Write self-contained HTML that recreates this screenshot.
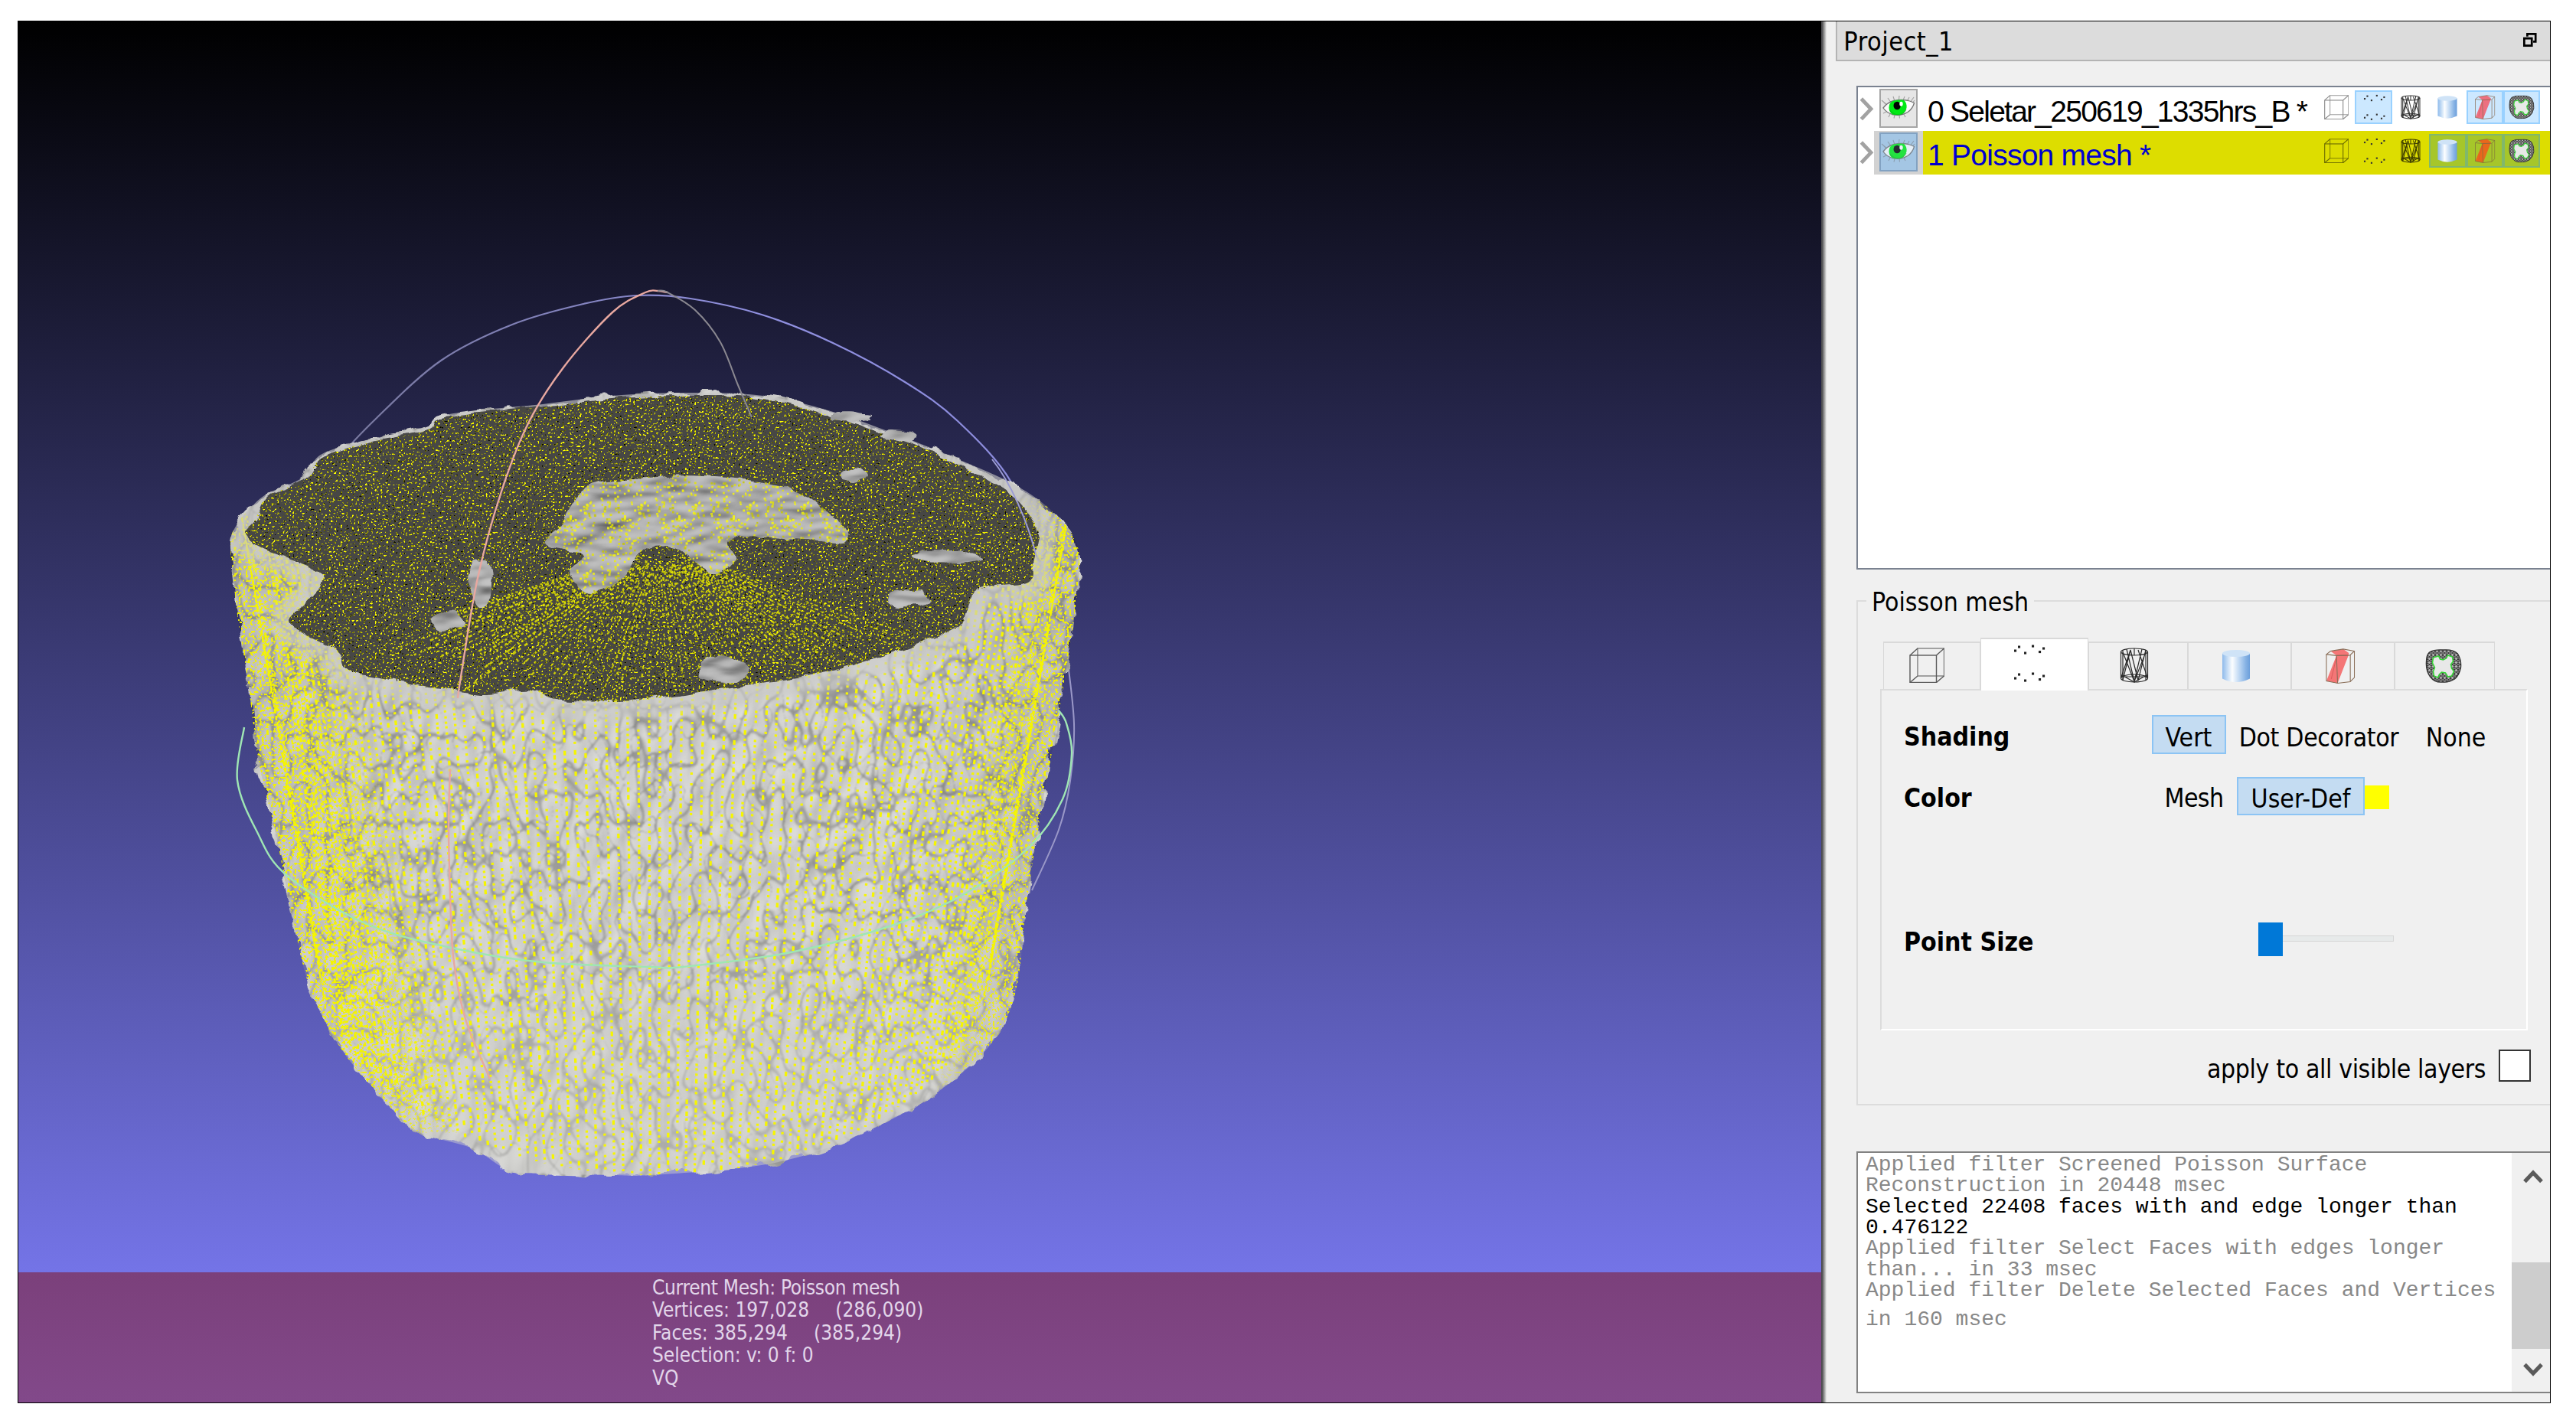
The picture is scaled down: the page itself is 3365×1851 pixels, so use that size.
<!DOCTYPE html>
<html><head><meta charset="utf-8"><title>MeshLab</title>
<style>
html,body{margin:0;padding:0;background:#fff;}
body{width:3365px;height:1851px;overflow:hidden;position:relative;font-family:"DejaVu Sans Condensed","Liberation Sans",sans-serif;}
#win{position:absolute;left:23px;top:27px;width:3309px;height:1806px;box-sizing:border-box;border:1px solid #000;overflow:hidden;background:#f0f0f0;}
#win>div{position:absolute;}
#view{left:0;top:0;width:2355px;height:1804px;overflow:hidden;background:linear-gradient(#000,#8080ff);}
#view svg.mesh{position:absolute;left:0;top:0;}
#band{position:absolute;left:0;top:1634px;width:2355px;height:170px;background:linear-gradient(#7b407b,#82498a);}
#info{position:absolute;left:828px;top:1640px;color:#e2d6ea;font-size:26px;line-height:29.45px;white-space:pre;}#info i{font-style:normal;letter-spacing:-0.3px}#info b{font-weight:normal;margin-left:4.5px}
#split{left:2355px;top:0;width:7px;height:1804px;background:linear-gradient(90deg,#48484c 0,#58585a 25%,#848484 45%,#b0b0b0 70%,#e4e4e4 95%,#f0f0f0 100%);}
#panel{left:2362px;top:0;width:945px;height:1804px;background:#f0f0f0;overflow:hidden;}
#panel>div{position:absolute;}
#title{left:12px;top:0;width:940px;height:52px;box-sizing:border-box;background:#dcdcdc;border-left:2px solid #b4b4b4;border-bottom:2px solid #b4b4b4;}
#title span{position:absolute;left:8.3px;top:5.8px;letter-spacing:0.5px;font-size:34px;line-height:40px;color:#000;}
#title svg{position:absolute;left:895.5px;top:14.5px;}
#tree{left:39px;top:84px;width:920px;height:632px;box-sizing:border-box;border:2px solid #7a8290;background:#fff;}
.row{position:absolute;left:0;width:916px;height:57px;}
.r0{top:0}.r1{top:57px}
.row>span{position:absolute;}
.arr{left:1px;top:13px;}
.eye{left:28px;top:2px;width:50px;height:51px;box-sizing:border-box;border:2px solid #a6a6a6;background:#e6e6e6;}
.eye.on{background:#a4c6e4;border-color:#82a2c2;top:2px;}.eye svg{position:absolute;left:0;top:-1px}.eye.on svg{opacity:.78}
.selbg{left:21px;top:0;width:64px;height:57px;background:#d2d2d2;}
.yel{left:85px;top:0;width:840px;height:57px;background:#dddd00;}
.lbl{left:91px;top:8.5px;font-family:"Liberation Sans",sans-serif;font-size:39px;line-height:46px;letter-spacing:-1.75px;color:#000;white-space:pre;}
.r1 .lbl{color:#0000d0;letter-spacing:-0.75px;}
.ic{top:4px;width:48.4px;height:44px;box-sizing:border-box;}
.ic.hl{background:#cce8ff;border:2px solid #99d1ff;}
.ic.hg{background:#a6c62a;border:2px solid #80b86c;}
.ic svg{position:absolute;left:50%;top:50%;transform:translate(-50%,-50%);}
#group{left:39px;top:756px;width:920px;height:660px;box-sizing:border-box;border:2px solid #dcdcdc;}
#group>div{position:absolute;}
#gtitle{left:11px;top:-21px;padding:0 7px;background:#f0f0f0;font-size:33.5px;line-height:44px;color:#000;}
#tabs{left:33px;top:52px;width:800px;height:62px;}
.tab{position:absolute;top:0;height:62px;box-sizing:border-box;border:2px solid #d9d9d9;border-bottom:none;border-left-width:1px;border-right-width:1px;background:#f0f0f0;}
.tab.sel{top:-5px;height:69px;background:#fff;z-index:2;border-color:#d9d9d9;}
.tab .ti{position:absolute;left:50%;top:50%;}.tab svg{position:absolute;left:0;top:0;transform:translate(-50%,-50%);}
#pane{left:29px;top:114px;width:846px;height:446px;box-sizing:border-box;border:2px solid #dcdcdc;border-right-color:#fff;border-bottom-color:#fff;background:#f0f0f0;}
#pane>div{position:absolute;}
.bl{left:29px;font-weight:bold;font-size:33.5px;line-height:44px;color:#000;}
.btn{box-sizing:border-box;font-size:33.5px;line-height:48px;text-align:center;color:#000;border:1px solid transparent;white-space:pre;}
.btn.on{background:#c4dcf2;border:2px solid #8cc4f4;line-height:46px;}
#ycol{left:631px;top:124px;width:32px;height:31px;background:#ffff00;}
#track{left:523px;top:320px;width:146px;height:8px;box-sizing:border-box;background:#e7eaea;border:1px solid #d6d6d6;}
#knob{left:492px;top:303px;width:32px;height:44px;background:#0078d7;}
#apply{left:456px;top:589px;letter-spacing:-0.38px;font-size:33.5px;line-height:44px;color:#000;white-space:pre;}
#chk{left:837px;top:585px;width:42px;height:42px;box-sizing:border-box;border:2px solid #333;background:#fff;}
#log{left:39px;top:1476px;width:920px;height:316px;box-sizing:border-box;border:2px solid #828282;background:#fff;}
#logtext{position:absolute;left:10px;top:2px;font-family:"Liberation Mono",monospace;font-size:28px;line-height:27.35px;color:#000;white-space:pre;}
#logtext .g{color:#888;}
#logtext .last{margin-top:10.5px;}
#sb{position:absolute;left:854px;top:0;width:60px;height:312px;background:#f0f0f0;}
#thumb{position:absolute;left:0;top:143px;width:60px;height:113px;background:#cdcdcd;}
#sb svg{position:absolute;left:15px;}

</style></head>
<body>
<div id="win">
<div id="view">
<svg class="mesh" width="2355" height="1804" viewBox="24 28 2355 1804">
<defs>
<filter id="bump" x="-2%" y="-2%" width="104%" height="104%" color-interpolation-filters="sRGB">
 <feTurbulence type="fractalNoise" baseFrequency="0.03 0.016" numOctaves="2" seed="3" result="n"/>
 <feDiffuseLighting in="n" surfaceScale="3.6" diffuseConstant="1.12" lighting-color="#cececc" result="l"><feDistantLight azimuth="235" elevation="64"/></feDiffuseLighting>
 <feTurbulence type="turbulence" baseFrequency="0.042 0.026" numOctaves="1" seed="21" result="t"/>
 <feColorMatrix in="t" type="matrix" values="3.0 0 0 0 0.73  3.0 0 0 0 0.73  3.0 0 0 0 0.73  0 0 0 0 1" result="cr0"/>
 <feGaussianBlur in="cr0" stdDeviation="1.3" result="cr"/>
 <feBlend in="l" in2="cr" mode="multiply" result="lc"/>
 <feTurbulence type="fractalNoise" baseFrequency="0.035" numOctaves="3" seed="8" result="n2"/>
 <feDisplacementMap in="SourceGraphic" in2="n2" scale="20" xChannelSelector="R" yChannelSelector="G" result="d"/>
 <feComposite in="lc" in2="d" operator="in"/>
</filter>
<filter id="bump2" x="-5%" y="-5%" width="110%" height="110%" color-interpolation-filters="sRGB">
 <feTurbulence type="fractalNoise" baseFrequency="0.02 0.045" numOctaves="2" seed="5" result="n"/>
 <feDiffuseLighting in="n" surfaceScale="5" diffuseConstant="1.05" lighting-color="#bcbcbc" result="l"><feDistantLight azimuth="250" elevation="60"/></feDiffuseLighting>
 <feTurbulence type="fractalNoise" baseFrequency="0.05" numOctaves="2" seed="9" result="n2"/>
 <feDisplacementMap in="SourceGraphic" in2="n2" scale="10" xChannelSelector="R" yChannelSelector="G" result="d"/>
 <feComposite in="l" in2="d" operator="in"/>
</filter>
<filter id="rough" x="-2%" y="-2%" width="104%" height="104%">
 <feTurbulence type="fractalNoise" baseFrequency="0.04" numOctaves="2" seed="4" result="n2"/>
 <feDisplacementMap in="SourceGraphic" in2="n2" scale="12" xChannelSelector="R" yChannelSelector="G"/>
</filter>
<pattern id="pe" width="71" height="89" patternUnits="userSpaceOnUse"><rect x="6.1" y="50.1" width="2.3" height="2.3" fill="#ffff00"/><rect x="25.3" y="39.0" width="3.2" height="3.2" fill="#c8c800"/><rect x="56.6" y="11.7" width="2.5" height="2.5" fill="#f0f000"/><rect x="21.1" y="19.6" width="2.7" height="2.7" fill="#f0f000"/><rect x="10.8" y="54.1" width="2.7" height="2.7" fill="#c8c800"/><rect x="60.0" y="51.9" width="2.5" height="2.5" fill="#e6e600"/><rect x="7.4" y="44.1" width="2.3" height="2.3" fill="#c8c800"/><rect x="17.5" y="70.8" width="2.7" height="2.7" fill="#ffff00"/><rect x="35.4" y="79.9" width="3.2" height="3.2" fill="#f0f000"/><rect x="15.5" y="48.1" width="3.0" height="3.0" fill="#e6e600"/><rect x="19.1" y="78.9" width="2.2" height="2.2" fill="#e6e600"/><rect x="4.7" y="35.4" width="2.3" height="2.3" fill="#e6e600"/><rect x="12.0" y="31.7" width="2.7" height="2.7" fill="#f0f000"/><rect x="6.3" y="11.9" width="2.5" height="2.5" fill="#ffff00"/><rect x="44.7" y="59.4" width="2.7" height="2.7" fill="#f0f000"/><rect x="40.1" y="79.4" width="2.6" height="2.6" fill="#ffff00"/><rect x="47.7" y="82.8" width="2.0" height="2.0" fill="#e6e600"/><rect x="32.8" y="62.8" width="2.4" height="2.4" fill="#e6e600"/><rect x="5.1" y="47.0" width="2.9" height="2.9" fill="#f0f000"/><rect x="53.9" y="78.7" width="2.4" height="2.4" fill="#c8c800"/><rect x="61.3" y="74.9" width="2.5" height="2.5" fill="#e6e600"/><rect x="58.7" y="49.3" width="2.7" height="2.7" fill="#c8c800"/><rect x="25.8" y="1.1" width="2.1" height="2.1" fill="#e6e600"/><rect x="43.5" y="85.4" width="3.1" height="3.1" fill="#ffff00"/><rect x="26.4" y="63.2" width="2.7" height="2.7" fill="#c8c800"/><rect x="31.5" y="46.5" width="2.6" height="2.6" fill="#e6e600"/><rect x="21.1" y="7.5" width="2.0" height="2.0" fill="#e6e600"/><rect x="33.8" y="52.8" width="3.1" height="3.1" fill="#ffff00"/><rect x="61.0" y="31.6" width="2.2" height="2.2" fill="#f0f000"/><rect x="35.3" y="64.8" width="2.4" height="2.4" fill="#c8c800"/><rect x="33.9" y="20.8" width="2.5" height="2.5" fill="#ffff00"/><rect x="13.5" y="37.1" width="3.0" height="3.0" fill="#f0f000"/><rect x="59.9" y="33.1" width="2.7" height="2.7" fill="#ffff00"/><rect x="14.3" y="11.6" width="2.4" height="2.4" fill="#e6e600"/><rect x="48.4" y="81.7" width="2.3" height="2.3" fill="#f0f000"/><rect x="7.7" y="40.5" width="3.1" height="3.1" fill="#c8c800"/><rect x="26.0" y="44.7" width="2.8" height="2.8" fill="#c8c800"/><rect x="21.8" y="71.3" width="2.3" height="2.3" fill="#e6e600"/><rect x="46.1" y="24.2" width="2.4" height="2.4" fill="#e6e600"/><rect x="43.6" y="34.8" width="2.2" height="2.2" fill="#ffff00"/><rect x="16.1" y="12.1" width="2.1" height="2.1" fill="#e6e600"/><rect x="30.4" y="54.2" width="2.8" height="2.8" fill="#ffff00"/><rect x="65.2" y="58.9" width="2.2" height="2.2" fill="#c8c800"/><rect x="17.4" y="61.4" width="2.9" height="2.9" fill="#e6e600"/><rect x="12.2" y="23.4" width="2.4" height="2.4" fill="#f0f000"/><rect x="26.8" y="68.1" width="3.1" height="3.1" fill="#e6e600"/><rect x="27.9" y="76.8" width="2.5" height="2.5" fill="#c8c800"/><rect x="30.8" y="53.8" width="3.1" height="3.1" fill="#c8c800"/><rect x="37.4" y="56.1" width="2.6" height="2.6" fill="#ffff00"/><rect x="31.5" y="56.0" width="2.2" height="2.2" fill="#e6e600"/><rect x="14.5" y="77.4" width="3.2" height="3.2" fill="#ffff00"/><rect x="36.5" y="68.0" width="2.4" height="2.4" fill="#e6e600"/><rect x="23.7" y="7.1" width="2.5" height="2.5" fill="#c8c800"/><rect x="52.2" y="41.9" width="2.0" height="2.0" fill="#e6e600"/><rect x="29.2" y="3.0" width="2.6" height="2.6" fill="#f0f000"/><rect x="32.0" y="86.0" width="3.1" height="3.1" fill="#c8c800"/><rect x="64.3" y="42.4" width="3.1" height="3.1" fill="#e6e600"/><rect x="51.5" y="37.8" width="2.7" height="2.7" fill="#f0f000"/><rect x="35.5" y="72.6" width="2.7" height="2.7" fill="#ffff00"/><rect x="45.6" y="82.1" width="3.0" height="3.0" fill="#f0f000"/><rect x="20.7" y="12.1" width="2.7" height="2.7" fill="#ffff00"/><rect x="39.0" y="17.3" width="2.6" height="2.6" fill="#e6e600"/><rect x="41.2" y="2.4" width="3.2" height="3.2" fill="#c8c800"/><rect x="37.0" y="85.1" width="2.1" height="2.1" fill="#e6e600"/><rect x="47.0" y="5.7" width="2.6" height="2.6" fill="#c8c800"/><rect x="62.6" y="68.8" width="2.5" height="2.5" fill="#f0f000"/><rect x="32.2" y="10.9" width="2.5" height="2.5" fill="#c8c800"/><rect x="35.7" y="9.3" width="2.5" height="2.5" fill="#e6e600"/><rect x="62.9" y="11.1" width="2.9" height="2.9" fill="#e6e600"/><rect x="2.4" y="13.4" width="2.0" height="2.0" fill="#ffff00"/><rect x="21.9" y="30.6" width="2.7" height="2.7" fill="#e6e600"/><rect x="34.0" y="50.1" width="3.0" height="3.0" fill="#ffff00"/><rect x="48.8" y="60.3" width="3.1" height="3.1" fill="#e6e600"/><rect x="25.6" y="35.6" width="2.6" height="2.6" fill="#f0f000"/><rect x="36.6" y="74.3" width="2.6" height="2.6" fill="#f0f000"/><rect x="36.0" y="73.2" width="2.7" height="2.7" fill="#f0f000"/><rect x="15.8" y="63.7" width="3.0" height="3.0" fill="#f0f000"/><rect x="21.5" y="27.1" width="3.1" height="3.1" fill="#f0f000"/><rect x="52.9" y="16.7" width="2.1" height="2.1" fill="#f0f000"/><rect x="9.0" y="7.6" width="2.5" height="2.5" fill="#c8c800"/><rect x="56.6" y="36.3" width="2.9" height="2.9" fill="#f0f000"/><rect x="13.6" y="54.0" width="3.0" height="3.0" fill="#e6e600"/><rect x="13.7" y="58.7" width="3.1" height="3.1" fill="#ffff00"/><rect x="7.8" y="43.5" width="2.9" height="2.9" fill="#f0f000"/><rect x="54.6" y="41.5" width="2.0" height="2.0" fill="#c8c800"/><rect x="10.0" y="15.9" width="2.2" height="2.2" fill="#f0f000"/><rect x="67.3" y="79.7" width="2.1" height="2.1" fill="#e6e600"/><rect x="9.1" y="58.6" width="2.1" height="2.1" fill="#e6e600"/><rect x="22.2" y="40.2" width="2.6" height="2.6" fill="#c8c800"/><rect x="14.3" y="32.1" width="2.8" height="2.8" fill="#e6e600"/><rect x="57.4" y="15.6" width="2.5" height="2.5" fill="#ffff00"/><rect x="27.6" y="16.8" width="2.2" height="2.2" fill="#e6e600"/><rect x="22.0" y="7.3" width="3.0" height="3.0" fill="#c8c800"/><rect x="38.7" y="16.4" width="2.7" height="2.7" fill="#ffff00"/><rect x="54.7" y="22.2" width="3.1" height="3.1" fill="#f0f000"/><rect x="55.4" y="34.9" width="3.1" height="3.1" fill="#ffff00"/><rect x="52.2" y="65.8" width="2.5" height="2.5" fill="#f0f000"/><rect x="4.8" y="29.4" width="2.6" height="2.6" fill="#e6e600"/><rect x="60.4" y="85.2" width="3.1" height="3.1" fill="#e6e600"/><rect x="15.8" y="81.2" width="2.8" height="2.8" fill="#ffff00"/><rect x="14.7" y="34.9" width="2.2" height="2.2" fill="#e6e600"/><rect x="26.5" y="86.0" width="2.8" height="2.8" fill="#e6e600"/><rect x="51.8" y="84.3" width="2.0" height="2.0" fill="#e6e600"/><rect x="50.2" y="22.1" width="2.5" height="2.5" fill="#e6e600"/><rect x="51.8" y="55.7" width="2.0" height="2.0" fill="#ffff00"/><rect x="17.1" y="77.9" width="2.7" height="2.7" fill="#c8c800"/><rect x="65.8" y="48.8" width="3.2" height="3.2" fill="#c8c800"/><rect x="55.0" y="6.6" width="2.7" height="2.7" fill="#e6e600"/><rect x="26.3" y="80.7" width="2.5" height="2.5" fill="#f0f000"/><rect x="58.2" y="46.6" width="2.7" height="2.7" fill="#c8c800"/><rect x="64.3" y="36.2" width="2.6" height="2.6" fill="#ffff00"/><rect x="24.9" y="24.6" width="2.8" height="2.8" fill="#ffff00"/><rect x="45.1" y="64.3" width="2.0" height="2.0" fill="#f0f000"/><rect x="39.8" y="54.4" width="2.5" height="2.5" fill="#c8c800"/><rect x="3.6" y="27.1" width="2.5" height="2.5" fill="#ffff00"/><rect x="5.0" y="77.9" width="2.5" height="2.5" fill="#c8c800"/><rect x="17.1" y="65.0" width="2.1" height="2.1" fill="#e6e600"/><rect x="63.7" y="62.2" width="2.6" height="2.6" fill="#f0f000"/><rect x="41.0" y="9.9" width="2.7" height="2.7" fill="#c8c800"/><rect x="8.0" y="74.1" width="2.4" height="2.4" fill="#f0f000"/><rect x="8.5" y="38.1" width="2.8" height="2.8" fill="#c8c800"/><rect x="40.9" y="55.0" width="2.8" height="2.8" fill="#ffff00"/><rect x="52.9" y="45.6" width="3.2" height="3.2" fill="#ffff00"/><rect x="49.9" y="20.5" width="2.1" height="2.1" fill="#ffff00"/><rect x="53.3" y="53.7" width="2.4" height="2.4" fill="#ffff00"/><rect x="41.5" y="62.4" width="2.8" height="2.8" fill="#f0f000"/><rect x="43.1" y="64.8" width="2.2" height="2.2" fill="#f0f000"/><rect x="34.1" y="56.2" width="2.2" height="2.2" fill="#e6e600"/><rect x="42.7" y="0.8" width="2.3" height="2.3" fill="#e6e600"/><rect x="42.4" y="8.8" width="2.6" height="2.6" fill="#e6e600"/><rect x="51.4" y="78.5" width="2.2" height="2.2" fill="#f0f000"/><rect x="42.9" y="32.1" width="2.6" height="2.6" fill="#f0f000"/><rect x="23.0" y="42.5" width="2.2" height="2.2" fill="#e6e600"/><rect x="54.6" y="38.5" width="3.0" height="3.0" fill="#f0f000"/><rect x="30.2" y="64.3" width="2.5" height="2.5" fill="#f0f000"/><rect x="25.1" y="56.2" width="3.2" height="3.2" fill="#ffff00"/><rect x="19.8" y="65.3" width="3.0" height="3.0" fill="#f0f000"/><rect x="29.1" y="31.8" width="2.1" height="2.1" fill="#ffff00"/><rect x="5.3" y="7.1" width="2.7" height="2.7" fill="#c8c800"/><rect x="55.4" y="39.9" width="3.0" height="3.0" fill="#e6e600"/><rect x="5.2" y="18.3" width="2.8" height="2.8" fill="#e6e600"/><rect x="47.3" y="42.5" width="2.9" height="2.9" fill="#ffff00"/><rect x="19.2" y="12.3" width="2.4" height="2.4" fill="#ffff00"/><rect x="24.9" y="10.1" width="2.9" height="2.9" fill="#ffff00"/><rect x="29.8" y="69.1" width="2.4" height="2.4" fill="#ffff00"/><rect x="15.0" y="83.2" width="2.9" height="2.9" fill="#f0f000"/><rect x="5.7" y="71.3" width="2.0" height="2.0" fill="#c8c800"/><rect x="39.8" y="68.5" width="2.9" height="2.9" fill="#ffff00"/><rect x="54.2" y="46.5" width="3.0" height="3.0" fill="#f0f000"/><rect x="12.0" y="65.3" width="3.1" height="3.1" fill="#ffff00"/></pattern>
<clipPath id="cb"><path d="M301.0 708.0 C301.7 696.5 304.7 693.3 309.0 686.0 C313.3 678.7 320.3 670.8 327.0 664.0 C333.7 657.2 337.3 651.8 349.0 645.0 C360.7 638.2 385.3 631.5 397.0 623.0 C408.7 614.5 405.5 602.0 419.0 594.0 C432.5 586.0 455.3 580.8 478.0 575.0 C500.7 569.2 539.2 564.2 555.0 559.0 C570.8 553.8 559.7 548.0 573.0 544.0 C586.3 540.0 612.3 537.7 635.0 535.0 C657.7 532.3 681.5 531.0 709.0 528.0 C736.5 525.0 768.2 519.5 800.0 517.0 C831.8 514.5 867.2 513.0 900.0 513.0 C932.8 513.0 967.3 513.3 997.0 517.0 C1026.7 520.7 1050.5 527.2 1078.0 535.0 C1105.5 542.8 1132.7 553.0 1162.0 564.0 C1191.3 575.0 1226.5 589.3 1254.0 601.0 C1281.5 612.7 1306.3 622.3 1327.0 634.0 C1347.7 645.7 1364.5 657.5 1378.0 671.0 C1391.5 684.5 1403.2 697.8 1408.0 715.0 C1412.8 732.2 1408.8 752.0 1407.0 774.0 C1405.2 796.0 1401.5 817.7 1397.0 847.0 C1392.5 876.3 1386.3 913.7 1380.0 950.0 C1373.7 986.3 1365.5 1026.8 1359.0 1065.0 C1352.5 1103.2 1346.3 1140.8 1341.0 1179.0 C1335.7 1217.2 1334.7 1263.3 1327.0 1294.0 C1319.3 1324.7 1311.0 1341.7 1295.0 1363.0 C1279.0 1384.3 1251.7 1406.0 1231.0 1422.0 C1210.3 1438.0 1196.3 1446.0 1171.0 1459.0 C1145.7 1472.0 1109.5 1489.3 1079.0 1500.0 C1048.5 1510.7 1026.2 1517.2 988.0 1523.0 C949.8 1528.8 881.3 1533.0 850.0 1535.0 C818.7 1537.0 823.5 1535.3 800.0 1535.0 C776.5 1534.7 731.8 1534.2 709.0 1533.0 C686.2 1531.8 678.3 1533.5 663.0 1528.0 C647.7 1522.5 636.8 1508.5 617.0 1500.0 C597.2 1491.5 563.8 1488.3 544.0 1477.0 C524.2 1465.7 514.2 1449.5 498.0 1432.0 C481.8 1414.5 462.3 1395.0 447.0 1372.0 C431.7 1349.0 416.7 1322.3 406.0 1294.0 C395.3 1265.7 390.7 1236.3 383.0 1202.0 C375.3 1167.7 367.5 1122.7 360.0 1088.0 C352.5 1053.3 344.2 1028.0 338.0 994.0 C331.8 960.0 327.5 914.7 323.0 884.0 C318.5 853.3 314.0 831.5 311.0 810.0 C308.0 788.5 306.7 772.0 305.0 755.0 C303.3 738.0 300.3 719.5 301.0 708.0Z"/></clipPath>
<clipPath id="cf"><path d="M320.0 697.0 C318.7 690.8 329.2 686.0 334.0 678.0 C338.8 670.0 338.5 657.5 349.0 649.0 C359.5 640.5 385.0 635.5 397.0 627.0 C409.0 618.5 407.5 606.0 421.0 598.0 C434.5 590.0 455.7 584.8 478.0 579.0 C500.3 573.2 539.0 568.2 555.0 563.0 C571.0 557.8 560.7 552.0 574.0 548.0 C587.3 544.0 612.5 541.7 635.0 539.0 C657.5 536.3 681.5 535.0 709.0 532.0 C736.5 529.0 768.2 523.5 800.0 521.0 C831.8 518.5 867.2 517.0 900.0 517.0 C932.8 517.0 968.7 517.3 997.0 521.0 C1025.3 524.7 1044.5 531.5 1070.0 539.0 C1095.5 546.5 1125.5 557.5 1150.0 566.0 C1174.5 574.5 1195.3 580.7 1217.0 590.0 C1238.7 599.3 1261.7 611.7 1280.0 622.0 C1298.3 632.3 1315.3 642.3 1327.0 652.0 C1338.7 661.7 1345.0 672.0 1350.0 680.0 C1355.0 688.0 1357.0 690.8 1357.0 700.0 C1357.0 709.2 1352.0 725.2 1350.0 735.0 C1348.0 744.8 1353.3 754.0 1345.0 759.0 C1336.7 764.0 1312.2 762.5 1300.0 765.0 C1287.8 767.5 1278.3 768.2 1272.0 774.0 C1265.7 779.8 1265.0 792.7 1262.0 800.0 C1259.0 807.3 1261.5 812.3 1254.0 818.0 C1246.5 823.7 1235.3 827.0 1217.0 834.0 C1198.7 841.0 1168.5 852.3 1144.0 860.0 C1119.5 867.7 1100.7 873.8 1070.0 880.0 C1039.3 886.2 996.7 891.5 960.0 897.0 C923.3 902.5 876.7 909.7 850.0 913.0 C823.3 916.3 820.5 917.0 800.0 917.0 C779.5 917.0 745.3 915.8 727.0 913.0 C708.7 910.2 705.3 901.2 690.0 900.0 C674.7 898.8 650.2 905.7 635.0 906.0 C619.8 906.3 611.2 903.3 599.0 902.0 C586.8 900.7 577.3 900.5 562.0 898.0 C546.7 895.5 524.7 890.7 507.0 887.0 C489.3 883.3 467.0 882.0 456.0 876.0 C445.0 870.0 449.7 858.3 441.0 851.0 C432.3 843.7 414.3 838.8 404.0 832.0 C393.7 825.2 379.0 817.8 379.0 810.0 C379.0 802.2 396.8 794.7 404.0 785.0 C411.2 775.3 424.3 760.7 422.0 752.0 C419.7 743.3 403.3 739.2 390.0 733.0 C376.7 726.8 353.7 721.0 342.0 715.0 C330.3 709.0 321.3 703.2 320.0 697.0Z"/></clipPath>
<linearGradient id="sh" x1="0" x2="1" y1="0" y2="0"><stop offset="0" stop-color="#000" stop-opacity=".10"/><stop offset=".25" stop-color="#000" stop-opacity="0"/><stop offset=".8" stop-color="#000" stop-opacity="0"/><stop offset="1" stop-color="#000" stop-opacity=".12"/></linearGradient>
<filter id="dots" x="0" y="0" width="100%" height="100%" color-interpolation-filters="sRGB">
 <feTurbulence type="fractalNoise" baseFrequency="0.40" numOctaves="1" seed="2" result="n"/>
 <feColorMatrix in="n" type="matrix" values="0 3.0 0 0 -0.85  0 3.0 0 0 -0.85  0 0 0 0 0  24 0 0 0 -14.0"/>
</filter>
<filter id="dots2" x="0" y="0" width="100%" height="100%" color-interpolation-filters="sRGB">
 <feTurbulence type="fractalNoise" baseFrequency="0.33" numOctaves="1" seed="12" result="n"/>
 <feColorMatrix in="n" type="matrix" values="0 0 0 0 0.95  0 0 0 0 0.95  0 0 0 0 0  24 0 0 0 -13.2" result="dd"/>
 <feComposite in="dd" in2="SourceGraphic" operator="in"/>
</filter>
<linearGradient id="fl" gradientUnits="userSpaceOnUse" x1="303" y1="755" x2="440" y2="723"><stop offset="0" stop-color="#fff"/><stop offset=".45" stop-color="#fff" stop-opacity=".8"/><stop offset="1" stop-color="#fff" stop-opacity="0"/></linearGradient>
<linearGradient id="fr" gradientUnits="userSpaceOnUse" x1="1412" y1="715" x2="1318" y2="702"><stop offset="0" stop-color="#fff"/><stop offset=".45" stop-color="#fff" stop-opacity=".8"/><stop offset="1" stop-color="#fff" stop-opacity="0"/></linearGradient>
<linearGradient id="lt" x1="0" x2="0" y1="0" y2="1"><stop offset="0" stop-color="#d0d0cc" stop-opacity="0"/><stop offset=".45" stop-color="#d0d0cc" stop-opacity=".05"/><stop offset=".7" stop-color="#d0d0cc" stop-opacity=".38"/><stop offset="1" stop-color="#d0d0cc" stop-opacity=".5"/></linearGradient>
<filter id="soft" x="-5%" y="-10%" width="110%" height="120%"><feGaussianBlur stdDeviation="5"/></filter>
</defs>
<g fill="none" stroke-width="2.2">
<linearGradient id="bg" gradientUnits="userSpaceOnUse" x1="440" x2="1350" y1="0" y2="0"><stop offset="0" stop-color="#77779c"/><stop offset=".35" stop-color="#8484c0"/><stop offset=".6" stop-color="#9090e0"/><stop offset="1" stop-color="#8c8cdc"/></linearGradient>
<path d="M426.0 630.0 C428.5 625.2 430.0 615.0 441.0 601.0 C452.0 587.0 469.5 567.7 492.0 546.0 C514.5 524.3 546.5 491.3 576.0 471.0 C605.5 450.7 638.0 436.3 669.0 424.0 C700.0 411.7 734.8 403.3 762.0 397.0 C789.2 390.7 808.7 387.2 832.0 386.0 C855.3 384.8 874.8 385.8 902.0 390.0 C929.2 394.2 964.0 401.3 995.0 411.0 C1026.0 420.7 1056.8 433.3 1088.0 448.0 C1119.2 462.7 1154.8 482.0 1182.0 499.0 C1209.2 516.0 1227.8 528.2 1251.0 550.0 C1274.2 571.8 1303.8 600.5 1321.0 630.0 C1338.2 659.5 1348.5 710.8 1354.0 727.0" stroke="url(#bg)"/>
<path d="M1393.0 851.0 C1394.7 866.7 1402.2 916.8 1403.0 945.0 C1403.8 973.2 1401.3 996.8 1398.0 1020.0 C1394.7 1043.2 1391.3 1060.2 1383.0 1084.0 C1374.7 1107.8 1353.8 1149.8 1348.0 1163.0" stroke="#9a98c8" stroke-width="2"/>
</g>
<path d="M301.0 708.0 C301.7 696.5 304.7 693.3 309.0 686.0 C313.3 678.7 320.3 670.8 327.0 664.0 C333.7 657.2 337.3 651.8 349.0 645.0 C360.7 638.2 385.3 631.5 397.0 623.0 C408.7 614.5 405.5 602.0 419.0 594.0 C432.5 586.0 455.3 580.8 478.0 575.0 C500.7 569.2 539.2 564.2 555.0 559.0 C570.8 553.8 559.7 548.0 573.0 544.0 C586.3 540.0 612.3 537.7 635.0 535.0 C657.7 532.3 681.5 531.0 709.0 528.0 C736.5 525.0 768.2 519.5 800.0 517.0 C831.8 514.5 867.2 513.0 900.0 513.0 C932.8 513.0 967.3 513.3 997.0 517.0 C1026.7 520.7 1050.5 527.2 1078.0 535.0 C1105.5 542.8 1132.7 553.0 1162.0 564.0 C1191.3 575.0 1226.5 589.3 1254.0 601.0 C1281.5 612.7 1306.3 622.3 1327.0 634.0 C1347.7 645.7 1364.5 657.5 1378.0 671.0 C1391.5 684.5 1403.2 697.8 1408.0 715.0 C1412.8 732.2 1408.8 752.0 1407.0 774.0 C1405.2 796.0 1401.5 817.7 1397.0 847.0 C1392.5 876.3 1386.3 913.7 1380.0 950.0 C1373.7 986.3 1365.5 1026.8 1359.0 1065.0 C1352.5 1103.2 1346.3 1140.8 1341.0 1179.0 C1335.7 1217.2 1334.7 1263.3 1327.0 1294.0 C1319.3 1324.7 1311.0 1341.7 1295.0 1363.0 C1279.0 1384.3 1251.7 1406.0 1231.0 1422.0 C1210.3 1438.0 1196.3 1446.0 1171.0 1459.0 C1145.7 1472.0 1109.5 1489.3 1079.0 1500.0 C1048.5 1510.7 1026.2 1517.2 988.0 1523.0 C949.8 1528.8 881.3 1533.0 850.0 1535.0 C818.7 1537.0 823.5 1535.3 800.0 1535.0 C776.5 1534.7 731.8 1534.2 709.0 1533.0 C686.2 1531.8 678.3 1533.5 663.0 1528.0 C647.7 1522.5 636.8 1508.5 617.0 1500.0 C597.2 1491.5 563.8 1488.3 544.0 1477.0 C524.2 1465.7 514.2 1449.5 498.0 1432.0 C481.8 1414.5 462.3 1395.0 447.0 1372.0 C431.7 1349.0 416.7 1322.3 406.0 1294.0 C395.3 1265.7 390.7 1236.3 383.0 1202.0 C375.3 1167.7 367.5 1122.7 360.0 1088.0 C352.5 1053.3 344.2 1028.0 338.0 994.0 C331.8 960.0 327.5 914.7 323.0 884.0 C318.5 853.3 314.0 831.5 311.0 810.0 C308.0 788.5 306.7 772.0 305.0 755.0 C303.3 738.0 300.3 719.5 301.0 708.0Z" fill="#c8c8c6" filter="url(#bump)"/>
<path d="M301.0 708.0 C301.7 696.5 304.7 693.3 309.0 686.0 C313.3 678.7 320.3 670.8 327.0 664.0 C333.7 657.2 337.3 651.8 349.0 645.0 C360.7 638.2 385.3 631.5 397.0 623.0 C408.7 614.5 405.5 602.0 419.0 594.0 C432.5 586.0 455.3 580.8 478.0 575.0 C500.7 569.2 539.2 564.2 555.0 559.0 C570.8 553.8 559.7 548.0 573.0 544.0 C586.3 540.0 612.3 537.7 635.0 535.0 C657.7 532.3 681.5 531.0 709.0 528.0 C736.5 525.0 768.2 519.5 800.0 517.0 C831.8 514.5 867.2 513.0 900.0 513.0 C932.8 513.0 967.3 513.3 997.0 517.0 C1026.7 520.7 1050.5 527.2 1078.0 535.0 C1105.5 542.8 1132.7 553.0 1162.0 564.0 C1191.3 575.0 1226.5 589.3 1254.0 601.0 C1281.5 612.7 1306.3 622.3 1327.0 634.0 C1347.7 645.7 1364.5 657.5 1378.0 671.0 C1391.5 684.5 1403.2 697.8 1408.0 715.0 C1412.8 732.2 1408.8 752.0 1407.0 774.0 C1405.2 796.0 1401.5 817.7 1397.0 847.0 C1392.5 876.3 1386.3 913.7 1380.0 950.0 C1373.7 986.3 1365.5 1026.8 1359.0 1065.0 C1352.5 1103.2 1346.3 1140.8 1341.0 1179.0 C1335.7 1217.2 1334.7 1263.3 1327.0 1294.0 C1319.3 1324.7 1311.0 1341.7 1295.0 1363.0 C1279.0 1384.3 1251.7 1406.0 1231.0 1422.0 C1210.3 1438.0 1196.3 1446.0 1171.0 1459.0 C1145.7 1472.0 1109.5 1489.3 1079.0 1500.0 C1048.5 1510.7 1026.2 1517.2 988.0 1523.0 C949.8 1528.8 881.3 1533.0 850.0 1535.0 C818.7 1537.0 823.5 1535.3 800.0 1535.0 C776.5 1534.7 731.8 1534.2 709.0 1533.0 C686.2 1531.8 678.3 1533.5 663.0 1528.0 C647.7 1522.5 636.8 1508.5 617.0 1500.0 C597.2 1491.5 563.8 1488.3 544.0 1477.0 C524.2 1465.7 514.2 1449.5 498.0 1432.0 C481.8 1414.5 462.3 1395.0 447.0 1372.0 C431.7 1349.0 416.7 1322.3 406.0 1294.0 C395.3 1265.7 390.7 1236.3 383.0 1202.0 C375.3 1167.7 367.5 1122.7 360.0 1088.0 C352.5 1053.3 344.2 1028.0 338.0 994.0 C331.8 960.0 327.5 914.7 323.0 884.0 C318.5 853.3 314.0 831.5 311.0 810.0 C308.0 788.5 306.7 772.0 305.0 755.0 C303.3 738.0 300.3 719.5 301.0 708.0Z" fill="url(#sh)"/>
<g clip-path="url(#cb)"><rect x="290" y="900" width="1130" height="650" fill="url(#lt)"/></g>
<g clip-path="url(#cb)" fill="none" stroke="#f6f600" stroke-width="3.3">
<path d="M307.0 622.7L416.6 1253.8" stroke-dasharray="3 5 3 3 3 4 3 5 3 8 3 5 3 4 3 4 3 4 3 4 3 4 3 8 3 5 6 6" stroke-dashoffset="25" stroke-width="2.2"/>
<path d="M307.4 628.2L416.9 1261.4" stroke-dasharray="3 6 3 4 6 11 3 4 3 3 6 6 3 8 3 11 3 3 3 6 3 4 6 8 3 5 3 8" stroke-dashoffset="20" stroke-width="2.2"/>
<path d="M309.4 639.1L418.5 1276.5" stroke-dasharray="3 8 3 5 3 11 3 11 6 6 3 4 6 5 6 3 3 4 6 5 3 5 3 11 3 11 3 8" stroke-dashoffset="10" stroke-width="2.2"/>
<path d="M310.9 644.5L419.7 1284.1" stroke-dasharray="6 4 3 4 3 4 3 5 3 3 3 4 3 5 3 4 3 6 3 4 6 11 3 5 3 5 6 5" stroke-dashoffset="5" stroke-width="2.2"/>
<path d="M317.9 660.7L425.3 1306.5" stroke-dasharray="3 4 3 4 3 5 6 3 6 4 3 5 3 4 3 8 6 4 3 8 3 4 3 4 6 11 3 8" stroke-dashoffset="25" stroke-width="2.2"/>
<path d="M321.0 666.0L427.8 1313.9" stroke-dasharray="3 6 3 3 3 6 3 6 3 11 3 8 3 6 3 4 3 4 3 5 3 5 3 4 3 5 3 5" stroke-dashoffset="1" stroke-width="2.2"/>
<path d="M337.1 687.0L440.7 1343.1" stroke-dasharray="3 8 6 6 3 4 3 4 6 5 3 8 3 11 3 5 3 5 6 5 3 6 3 8 3 4 3 8" stroke-dashoffset="4" stroke-width="2.2"/>
<path d="M347.3 697.2L448.9 1357.3" stroke-dasharray="6 5 3 5 3 5 3 6 6 3 3 5 3 5 3 3 3 5 3 5 6 4 3 11 6 4 3 5" stroke-dashoffset="19"/>
<path d="M353.0 702.2L453.4 1364.3" stroke-dasharray="3 5 3 4 3 5 3 6 3 4 3 5 3 4 3 5 3 4 6 4 6 4 3 3 3 5 3 5" stroke-dashoffset="27"/>
<path d="M359.0 707.2L458.2 1371.2" stroke-dasharray="3 4 3 5 3 5 3 5 3 3 3 4 3 11 3 8 3 11 3 4 3 6 3 11 3 5 3 4" stroke-dashoffset="38"/>
<path d="M365.4 712.1L463.3 1378.0" stroke-dasharray="3 4 3 8 3 11 3 5 3 5 6 5 3 11 3 3 3 3 3 11 3 6 3 3 3 11 6 11" stroke-dashoffset="16"/>
<path d="M372.1 716.9L468.7 1384.8" stroke-dasharray="3 4 3 4 3 5 3 4 3 5 6 3 3 5 3 11 3 4 6 5 3 4 6 11 3 6 6 11" stroke-dashoffset="23"/>
<path d="M379.2 721.7L474.4 1391.4" stroke-dasharray="3 3 3 11 3 4 3 11 3 3 3 5 6 4 3 8 3 5 6 8 3 3 3 5 3 5 3 5" stroke-dashoffset="26"/>
<path d="M386.6 726.4L480.3 1397.9" stroke-dasharray="6 4 3 6 3 6 3 5 3 4 6 3 3 4 6 8 3 8 6 3 3 8 3 5 3 4 6 5" stroke-dashoffset="25"/>
<path d="M394.4 731.0L486.5 1404.4" stroke-dasharray="3 11 3 11 6 11 3 11 3 8 6 4 3 5 3 5 3 3 3 4 3 8 3 5 3 4 3 3" stroke-dashoffset="9"/>
<path d="M402.4 735.6L492.9 1410.7" stroke-dasharray="3 4 3 4 3 6 6 11 3 8 3 5 3 3 3 8 3 5 6 3 3 4 3 4 3 5 3 8" stroke-dashoffset="27"/>
<path d="M410.8 740.1L499.6 1416.9" stroke-dasharray="6 4 3 5 3 11 6 4 3 5 3 11 6 4 6 6 3 4 3 6 3 5 3 3 3 11 3 3" stroke-dashoffset="19"/>
<path d="M419.5 744.4L506.6 1423.0" stroke-dasharray="3 5 3 6 3 6 3 5 3 8 3 8 6 3 6 8 3 5 6 5 3 4 6 5 6 4 3 5" stroke-dashoffset="33"/>
<path d="M428.5 748.7L513.8 1429.0" stroke-dasharray="3 6 6 4 6 5 3 5 3 8 3 6 3 8 3 3 6 11 3 5 6 6 3 4 3 3 3 6" stroke-dashoffset="23"/>
<path d="M437.8 752.9L521.3 1434.8" stroke-dasharray="3 5 3 4 6 8 3 6 3 3 3 5 3 3 3 8 3 8 3 5 3 11 6 8 6 3 3 5" stroke-dashoffset="19"/>
<path d="M447.4 757.0L528.9 1440.5" stroke-dasharray="6 6 6 3 3 5 3 5 3 5 3 3 3 8 3 5 3 11 3 4 3 6 3 6 3 3 3 5" stroke-dashoffset="25"/>
<path d="M457.3 761.0L536.9 1446.1" stroke-dasharray="3 5 3 4 3 11 3 5 3 8 3 6 3 11 3 5 3 6 3 4 3 4 3 5 3 11 3 11" stroke-dashoffset="2"/>
<path d="M467.5 765.0L545.0 1451.5" stroke-dasharray="3 8 6 3 3 5 6 8 3 5 3 6 3 6 3 4 3 8 3 5 3 4 3 8 3 5 3 4" stroke-dashoffset="0"/>
<path d="M478.0 768.8L553.4 1456.8" stroke-dasharray="6 4 3 5 6 5 6 8 3 3 3 4 3 5 3 6 3 4 6 6 3 11 3 6 3 5 6 5" stroke-dashoffset="14"/>
<path d="M488.7 772.5L561.9 1462.0" stroke-dasharray="6 8 3 8 3 5 3 11 3 4 3 5 6 8 3 4 3 3 3 4 3 8 3 6 3 4 6 5" stroke-dashoffset="23"/>
<path d="M499.7 776.1L570.7 1467.0" stroke-dasharray="3 5 3 3 3 4 3 5 3 3 3 6 6 4 3 8 6 3 6 6 3 8 3 3 3 5 3 5" stroke-dashoffset="18"/>
<path d="M510.9 779.5L579.7 1471.8" stroke-dasharray="3 11 3 3 3 3 3 4 3 5 3 3 3 5 3 11 3 5 3 6 3 5 3 11 6 5 3 4" stroke-dashoffset="30"/>
<path d="M522.4 782.9L588.9 1476.5" stroke-dasharray="6 8 3 3 3 4 3 6 6 6 3 5 3 11 3 5 3 4 3 4 3 6 3 4 3 3 3 5" stroke-dashoffset="13"/>
<path d="M534.1 786.2L598.3 1481.0" stroke-dasharray="3 6 3 4 3 6 3 4 6 3 3 8 3 3 6 4 3 5 3 4 3 4 3 4 3 6 6 11" stroke-dashoffset="14"/>
<path d="M546.0 789.3L607.8 1485.4" stroke-dasharray="6 8 3 5 3 8 3 4 3 3 3 8 3 5 3 6 6 8 3 4 3 11 6 11 6 8 3 5" stroke-dashoffset="24"/>
<path d="M558.2 792.3L617.5 1489.6" stroke-dasharray="3 3 3 3 3 11 6 5 3 3 3 3 3 4 3 11 3 5 3 6 3 11 3 8 3 4 6 4" stroke-dashoffset="14"/>
<path d="M570.5 795.2L627.4 1493.6" stroke-dasharray="3 4 3 4 3 5 3 4 3 3 3 5 3 6 6 5 3 3 6 5 6 5 3 4 3 11 6 5" stroke-dashoffset="4"/>
<path d="M583.1 798.0L637.5 1497.4" stroke-dasharray="6 3 3 4 3 6 3 4 3 3 3 5 3 4 6 4 3 8 3 11 6 4 3 5 3 6 3 8" stroke-dashoffset="24"/>
<path d="M595.9 800.6L647.7 1501.1" stroke-dasharray="3 6 3 5 3 5 3 4 3 4 3 11 3 4 3 4 3 6 3 6 3 5 3 4 3 6 3 8" stroke-dashoffset="12"/>
<path d="M608.8 803.1L658.1 1504.6" stroke-dasharray="3 4 3 8 3 8 3 11 3 4 3 6 3 8 3 11 3 4 3 4 3 4 6 5 6 8 3 8" stroke-dashoffset="38"/>
<path d="M621.9 805.5L668.5 1507.9" stroke-dasharray="3 11 3 6 6 6 3 11 3 5 3 5 3 8 3 4 3 5 6 8 3 6 3 4 3 4 6 5" stroke-dashoffset="5"/>
<path d="M635.2 807.8L679.2 1511.1" stroke-dasharray="3 3 3 3 3 6 3 4 6 4 3 4 6 6 6 3 3 3 6 8 3 4 3 4 6 8 3 5" stroke-dashoffset="31"/>
<path d="M648.7 809.9L689.9 1514.0" stroke-dasharray="3 4 3 8 3 4 3 4 3 5 6 4 6 11 3 3 3 6 3 4 3 8 3 4 3 5 3 4" stroke-dashoffset="4"/>
<path d="M662.3 811.9L700.8 1516.8" stroke-dasharray="3 5 3 4 3 5 3 6 3 5 3 8 6 3 3 11 3 4 6 4 3 4 3 4 6 4 6 3" stroke-dashoffset="14"/>
<path d="M676.0 813.8L711.8 1519.4" stroke-dasharray="3 4 6 4 3 3 6 4 6 5 3 3 6 8 3 4 3 5 3 4 6 6 6 5 3 4 3 4" stroke-dashoffset="25"/>
<path d="M689.8 815.5L722.9 1521.7" stroke-dasharray="3 5 3 5 3 6 3 8 6 8 3 8 3 11 3 3 3 3 3 8 3 6 6 5 3 6 3 6" stroke-dashoffset="23"/>
<path d="M703.8 817.0L734.0 1523.9" stroke-dasharray="6 5 3 11 3 6 6 4 3 6 3 6 3 6 3 5 3 3 3 4 6 4 3 6 3 4 3 5" stroke-dashoffset="37"/>
<path d="M717.9 818.5L745.3 1525.9" stroke-dasharray="3 8 3 8 3 5 3 4 3 8 3 5 3 3 3 4 3 5 3 3 6 3 6 4 3 4 3 3" stroke-dashoffset="39"/>
<path d="M732.0 819.8L756.6 1527.7" stroke-dasharray="3 3 6 8 3 4 3 4 6 4 6 11 6 4 6 6 3 4 3 4 3 8 3 4 3 4 6 6" stroke-dashoffset="34"/>
<path d="M746.3 820.9L768.0 1529.3" stroke-dasharray="3 4 3 5 6 8 3 8 6 5 6 11 6 8 3 11 3 4 3 6 3 3 3 4 3 8 3 8" stroke-dashoffset="28"/>
<path d="M760.6 821.9L779.5 1530.7" stroke-dasharray="3 11 3 4 6 8 3 4 6 5 3 6 6 3 3 4 3 8 3 5 6 4 3 4 6 11 6 11" stroke-dashoffset="7"/>
<path d="M775.0 822.8L791.0 1532.0" stroke-dasharray="3 4 3 4 3 4 3 6 3 4 3 11 3 11 3 11 3 5 3 5 3 5 3 6 3 4 3 4" stroke-dashoffset="23"/>
<path d="M789.5 823.5L802.6 1533.0" stroke-dasharray="3 6 3 5 3 5 3 5 3 3 3 5 3 5 3 4 3 11 3 5 3 5 3 4 6 4 3 4" stroke-dashoffset="39"/>
<path d="M804.0 824.1L814.2 1533.8" stroke-dasharray="3 4 3 5 3 3 6 6 3 5 6 11 3 6 3 5 3 6 3 4 3 4 3 4 3 3 3 4" stroke-dashoffset="12"/>
<path d="M818.6 824.5L825.8 1534.4" stroke-dasharray="3 5 3 4 3 4 3 3 6 4 3 4 6 4 3 6 3 11 3 4 6 4 6 5 3 11 3 4" stroke-dashoffset="8"/>
<path d="M833.1 824.8L837.5 1534.8" stroke-dasharray="3 5 3 5 3 4 3 4 6 3 3 11 3 6 3 4 3 4 3 4 3 5 3 3 6 3 3 4" stroke-dashoffset="38"/>
<path d="M847.7 825.0L849.2 1535.0" stroke-dasharray="3 4 3 6 3 5 6 5 6 6 3 5 3 8 3 5 3 3 3 6 3 6 3 6 6 5 6 4" stroke-dashoffset="12"/>
<path d="M862.3 825.0L860.8 1535.0" stroke-dasharray="3 5 3 11 6 5 3 4 3 5 3 5 3 3 3 5 3 4 3 6 3 3 3 4 3 5 6 5" stroke-dashoffset="2"/>
<path d="M876.9 824.8L872.5 1534.8" stroke-dasharray="6 4 3 6 3 4 6 4 6 5 3 5 6 5 3 4 6 3 3 11 3 8 3 8 3 4 3 5" stroke-dashoffset="10"/>
<path d="M891.4 824.5L884.2 1534.4" stroke-dasharray="6 5 3 6 3 4 3 6 3 5 3 4 3 11 3 6 3 5 3 4 3 6 3 4 3 6 3 4" stroke-dashoffset="17"/>
<path d="M906.0 824.1L895.8 1533.8" stroke-dasharray="3 11 3 5 3 4 3 3 3 5 3 4 3 6 3 4 3 11 3 11 3 11 6 3 3 4 6 3" stroke-dashoffset="28"/>
<path d="M920.5 823.5L907.4 1533.0" stroke-dasharray="3 8 3 3 3 4 3 4 6 5 3 3 3 8 6 4 6 3 3 6 3 4 3 3 3 5 3 6" stroke-dashoffset="30"/>
<path d="M935.0 822.8L919.0 1532.0" stroke-dasharray="3 6 3 6 3 8 6 11 3 6 6 5 3 4 6 5 3 6 3 8 3 6 3 4 3 6 6 4" stroke-dashoffset="31"/>
<path d="M949.4 821.9L930.5 1530.7" stroke-dasharray="3 8 3 11 6 5 6 11 3 4 3 11 6 3 3 3 3 11 3 4 3 3 3 8 3 5 3 4" stroke-dashoffset="27"/>
<path d="M963.7 820.9L942.0 1529.3" stroke-dasharray="3 3 3 11 6 4 3 6 3 6 3 5 6 5 3 5 3 5 3 4 6 5 3 3 3 6 6 8" stroke-dashoffset="4"/>
<path d="M978.0 819.8L953.4 1527.7" stroke-dasharray="3 4 3 5 6 5 3 4 3 5 3 4 3 8 6 8 3 5 6 11 3 8 3 3 3 4 6 5" stroke-dashoffset="14"/>
<path d="M992.1 818.5L964.7 1525.9" stroke-dasharray="3 4 3 8 3 11 3 4 3 5 3 6 3 3 3 5 3 5 6 3 3 4 3 5 3 11 3 3" stroke-dashoffset="6"/>
<path d="M1006.2 817.0L976.0 1523.9" stroke-dasharray="3 3 6 5 3 5 3 6 3 8 3 8 3 6 3 6 3 8 3 8 3 11 3 4 6 8 6 8" stroke-dashoffset="40"/>
<path d="M1020.2 815.5L987.1 1521.7" stroke-dasharray="3 5 3 8 3 4 3 4 3 4 3 5 3 6 3 3 3 11 3 8 3 11 3 5 3 4 3 5" stroke-dashoffset="29"/>
<path d="M1034.0 813.8L998.2 1519.4" stroke-dasharray="3 11 3 8 6 5 6 5 3 8 3 4 3 4 3 3 3 11 6 3 6 4 6 11 3 4 3 5" stroke-dashoffset="31"/>
<path d="M1047.7 811.9L1009.2 1516.8" stroke-dasharray="3 6 3 6 3 3 3 8 6 5 3 3 3 5 6 5 3 8 3 11 6 6 3 3 6 5 3 4" stroke-dashoffset="29"/>
<path d="M1061.3 809.9L1020.1 1514.0" stroke-dasharray="6 11 6 8 3 5 3 5 3 11 6 5 3 5 3 4 3 6 3 8 3 8 3 8 3 4 3 8" stroke-dashoffset="14"/>
<path d="M1074.8 807.8L1030.8 1511.1" stroke-dasharray="6 5 3 8 3 11 3 3 3 8 3 6 3 11 3 5 3 8 3 4 3 4 3 6 3 3 3 6" stroke-dashoffset="33"/>
<path d="M1088.1 805.5L1041.5 1507.9" stroke-dasharray="6 6 3 11 6 5 6 4 3 3 6 11 3 11 3 3 3 6 6 3 3 3 3 4 3 5 6 5" stroke-dashoffset="9"/>
<path d="M1101.2 803.1L1051.9 1504.6" stroke-dasharray="3 3 3 6 6 8 3 5 3 5 3 4 3 4 3 3 3 5 3 11 3 3 3 6 3 6 3 6" stroke-dashoffset="13"/>
<path d="M1114.1 800.6L1062.3 1501.1" stroke-dasharray="6 6 3 11 3 5 3 6 3 5 3 6 3 6 6 8 3 4 3 4 6 6 3 6 3 6 3 11" stroke-dashoffset="23"/>
<path d="M1126.9 798.0L1072.5 1497.4" stroke-dasharray="3 5 6 3 3 3 3 6 3 6 6 8 3 4 6 3 3 4 3 5 3 4 3 3 6 5 3 3" stroke-dashoffset="22"/>
<path d="M1139.5 795.2L1082.6 1493.6" stroke-dasharray="3 6 3 5 3 5 3 3 3 6 3 8 3 4 3 4 3 4 3 11 3 5 3 11 3 5 6 8" stroke-dashoffset="23"/>
<path d="M1151.8 792.3L1092.5 1489.6" stroke-dasharray="3 5 6 11 3 5 3 3 3 5 6 3 3 11 3 5 3 11 3 11 3 8 3 5 3 5 3 4" stroke-dashoffset="15"/>
<path d="M1164.0 789.3L1102.2 1485.4" stroke-dasharray="3 6 3 8 3 5 3 5 3 6 3 4 3 4 6 4 6 8 3 3 3 4 3 11 3 11 3 11" stroke-dashoffset="34"/>
<path d="M1175.9 786.2L1111.7 1481.0" stroke-dasharray="3 3 3 5 3 4 3 5 3 4 3 4 3 5 3 5 3 3 3 3 3 5 3 4 6 6 3 4" stroke-dashoffset="20"/>
<path d="M1187.6 782.9L1121.1 1476.5" stroke-dasharray="3 3 3 5 6 5 6 4 6 11 3 5 3 5 3 5 3 4 3 4 3 8 3 4 6 6 6 3" stroke-dashoffset="3"/>
<path d="M1199.1 779.5L1130.3 1471.8" stroke-dasharray="6 11 3 8 3 5 3 4 3 6 3 6 3 6 6 4 3 4 3 3 6 5 6 5 6 3 3 3" stroke-dashoffset="8"/>
<path d="M1210.3 776.1L1139.3 1467.0" stroke-dasharray="3 8 6 5 6 8 3 6 3 6 3 4 3 4 3 3 3 5 6 4 3 3 3 6 3 3 3 4" stroke-dashoffset="14"/>
<path d="M1221.3 772.5L1148.1 1462.0" stroke-dasharray="3 4 3 11 3 8 3 4 3 4 3 4 3 8 6 4 6 4 6 3 6 5 3 3 3 6 3 8" stroke-dashoffset="37"/>
<path d="M1232.0 768.8L1156.6 1456.8" stroke-dasharray="6 5 3 5 3 4 6 6 3 3 3 5 3 5 3 4 3 8 3 5 3 4 6 6 3 5 3 11" stroke-dashoffset="17"/>
<path d="M1242.5 765.0L1165.0 1451.5" stroke-dasharray="3 4 3 8 6 4 3 3 6 5 3 6 3 8 3 5 6 3 3 4 3 5 3 5 3 8 3 6" stroke-dashoffset="0"/>
<path d="M1252.7 761.0L1173.1 1446.1" stroke-dasharray="3 3 3 6 3 11 3 3 3 8 3 11 3 11 6 8 3 6 3 8 3 6 6 4 3 4 3 4" stroke-dashoffset="2"/>
<path d="M1262.6 757.0L1181.1 1440.5" stroke-dasharray="6 8 3 5 3 6 3 6 3 3 3 11 3 5 3 11 3 4 3 3 6 5 3 3 3 4 3 4" stroke-dashoffset="34"/>
<path d="M1272.2 752.9L1188.7 1434.8" stroke-dasharray="3 4 3 6 3 6 3 8 3 5 3 6 3 11 3 8 6 5 3 11 6 5 6 4 3 5 3 4" stroke-dashoffset="23"/>
<path d="M1281.5 748.7L1196.2 1429.0" stroke-dasharray="3 6 3 5 3 11 3 8 3 8 6 8 6 6 3 4 3 8 3 4 3 11 3 8 3 5 3 11" stroke-dashoffset="18"/>
<path d="M1290.5 744.4L1203.4 1423.0" stroke-dasharray="3 6 6 5 3 3 3 11 3 4 3 4 3 4 3 4 3 6 6 4 3 3 3 3 3 4 6 4" stroke-dashoffset="6"/>
<path d="M1299.2 740.1L1210.4 1416.9" stroke-dasharray="3 3 3 11 6 5 3 4 6 11 3 5 6 5 3 8 3 11 3 4 3 3 6 3 3 5 3 5" stroke-dashoffset="15"/>
<path d="M1307.6 735.6L1217.1 1410.7" stroke-dasharray="3 6 3 5 3 6 6 5 6 4 3 4 3 4 3 8 6 11 3 5 3 4 3 5 3 5 3 4" stroke-dashoffset="32"/>
<path d="M1315.6 731.0L1223.5 1404.4" stroke-dasharray="3 8 6 5 3 8 3 4 3 6 6 6 3 5 3 5 6 3 3 8 3 4 3 5 3 8 3 4" stroke-dashoffset="40"/>
<path d="M1323.4 726.4L1229.7 1397.9" stroke-dasharray="3 4 3 5 6 5 3 4 3 11 3 5 6 5 3 11 3 5 3 6 6 5 3 4 6 4 3 3" stroke-dashoffset="15"/>
<path d="M1330.8 721.7L1235.6 1391.4" stroke-dasharray="6 11 3 11 3 6 3 8 6 6 3 4 3 4 3 6 3 4 3 4 3 4 3 8 3 4 3 6" stroke-dashoffset="36"/>
<path d="M1337.9 716.9L1241.3 1384.8" stroke-dasharray="3 5 3 11 3 11 3 6 3 4 3 8 3 11 3 4 3 4 3 4 6 4 6 4 3 5 3 6" stroke-dashoffset="6"/>
<path d="M1344.6 712.1L1246.7 1378.0" stroke-dasharray="3 8 3 11 3 8 3 5 3 6 3 4 6 6 3 5 6 11 3 5 3 11 3 4 3 5 3 11" stroke-dashoffset="0"/>
<path d="M1351.0 707.2L1251.8 1371.2" stroke-dasharray="3 8 3 11 6 4 6 5 3 6 3 8 3 4 3 11 3 6 3 5 3 6 6 11 3 11 3 11" stroke-dashoffset="32"/>
<path d="M1357.0 702.2L1256.6 1364.3" stroke-dasharray="3 4 3 3 3 8 3 6 3 4 6 5 3 3 3 6 3 6 3 5 3 3 3 8 3 4 3 4" stroke-dashoffset="21"/>
<path d="M1362.7 697.2L1261.1 1357.3" stroke-dasharray="3 11 3 4 3 5 3 8 3 11 3 5 3 11 6 6 3 11 3 5 3 5 3 6 3 4 3 6" stroke-dashoffset="12"/>
<path d="M1372.9 687.0L1269.3 1343.1" stroke-dasharray="3 5 6 5 3 5 6 5 3 3 6 3 3 11 6 4 3 3 3 5 3 4 3 5 3 11 3 3" stroke-dashoffset="1" stroke-width="2.2"/>
<path d="M1377.5 681.8L1273.0 1335.9" stroke-dasharray="3 3 6 4 3 8 3 8 3 11 3 6 6 5 3 8 3 5 6 3 3 3 3 11 3 8 3 4" stroke-dashoffset="17" stroke-width="2.2"/>
<path d="M1392.1 660.7L1284.7 1306.5" stroke-dasharray="3 11 3 11 3 6 6 6 3 4 6 8 6 5 3 11 6 4 3 3 6 5 3 4 3 8 3 4" stroke-dashoffset="1" stroke-width="2.2"/>
<path d="M1394.8 655.3L1286.9 1299.1" stroke-dasharray="3 4 3 4 3 4 3 4 3 3 3 3 6 11 3 11 6 3 3 4 3 6 3 3 3 6 3 11" stroke-dashoffset="37" stroke-width="2.2"/>
<path d="M1399.1 644.5L1290.3 1284.1" stroke-dasharray="3 5 6 5 3 11 3 5 3 6 3 8 3 5 3 4 3 8 3 6 3 5 3 4 3 4 3 11" stroke-dashoffset="8" stroke-width="2.2"/>
<path d="M1400.6 639.1L1291.5 1276.5" stroke-dasharray="6 6 3 5 3 11 6 4 3 5 3 5 3 5 6 8 3 5 3 6 3 4 6 4 3 4 3 3" stroke-dashoffset="8" stroke-width="2.2"/>
<path d="M1401.8 633.6L1292.4 1269.0" stroke-dasharray="3 11 6 11 3 11 3 3 3 3 6 4 3 4 6 6 3 4 6 5 3 5 3 4 6 6 3 5" stroke-dashoffset="6" stroke-width="2.2"/>
<path d="M1402.6 628.2L1293.1 1261.4" stroke-dasharray="3 11 3 11 3 3 3 6 3 8 3 5 3 4 3 3 3 3 3 11 3 8 6 6 3 6 3 5" stroke-dashoffset="6" stroke-width="2.2"/>
<path d="M1403.0 622.7L1293.4 1253.8" stroke-dasharray="6 3 3 3 3 4 3 6 3 5 3 4 3 11 3 5 3 11 3 6 3 4 3 5 3 3 3 4" stroke-dashoffset="2" stroke-width="2.2"/>
</g>
<g clip-path="url(#cb)"><path d="M290 690L450 690L600 1480L400 1480Z" fill="url(#fl)" filter="url(#dots2)"/><path d="M1300 650L1420 650L1350 1400L1200 1460Z" fill="url(#fr)" filter="url(#dots2)"/></g>
<g clip-path="url(#cb)"><path d="M320.0 697.0 C318.7 690.8 329.2 686.0 334.0 678.0 C338.8 670.0 338.5 657.5 349.0 649.0 C359.5 640.5 385.0 635.5 397.0 627.0 C409.0 618.5 407.5 606.0 421.0 598.0 C434.5 590.0 455.7 584.8 478.0 579.0 C500.3 573.2 539.0 568.2 555.0 563.0 C571.0 557.8 560.7 552.0 574.0 548.0 C587.3 544.0 612.5 541.7 635.0 539.0 C657.5 536.3 681.5 535.0 709.0 532.0 C736.5 529.0 768.2 523.5 800.0 521.0 C831.8 518.5 867.2 517.0 900.0 517.0 C932.8 517.0 968.7 517.3 997.0 521.0 C1025.3 524.7 1044.5 531.5 1070.0 539.0 C1095.5 546.5 1125.5 557.5 1150.0 566.0 C1174.5 574.5 1195.3 580.7 1217.0 590.0 C1238.7 599.3 1261.7 611.7 1280.0 622.0 C1298.3 632.3 1315.3 642.3 1327.0 652.0 C1338.7 661.7 1345.0 672.0 1350.0 680.0 C1355.0 688.0 1357.0 690.8 1357.0 700.0 C1357.0 709.2 1352.0 725.2 1350.0 735.0 C1348.0 744.8 1353.3 754.0 1345.0 759.0 C1336.7 764.0 1312.2 762.5 1300.0 765.0 C1287.8 767.5 1278.3 768.2 1272.0 774.0 C1265.7 779.8 1265.0 792.7 1262.0 800.0 C1259.0 807.3 1261.5 812.3 1254.0 818.0 C1246.5 823.7 1235.3 827.0 1217.0 834.0 C1198.7 841.0 1168.5 852.3 1144.0 860.0 C1119.5 867.7 1100.7 873.8 1070.0 880.0 C1039.3 886.2 996.7 891.5 960.0 897.0 C923.3 902.5 876.7 909.7 850.0 913.0 C823.3 916.3 820.5 917.0 800.0 917.0 C779.5 917.0 745.3 915.8 727.0 913.0 C708.7 910.2 705.3 901.2 690.0 900.0 C674.7 898.8 650.2 905.7 635.0 906.0 C619.8 906.3 611.2 903.3 599.0 902.0 C586.8 900.7 577.3 900.5 562.0 898.0 C546.7 895.5 524.7 890.7 507.0 887.0 C489.3 883.3 467.0 882.0 456.0 876.0 C445.0 870.0 449.7 858.3 441.0 851.0 C432.3 843.7 414.3 838.8 404.0 832.0 C393.7 825.2 379.0 817.8 379.0 810.0 C379.0 802.2 396.8 794.7 404.0 785.0 C411.2 775.3 424.3 760.7 422.0 752.0 C419.7 743.3 403.3 739.2 390.0 733.0 C376.7 726.8 353.7 721.0 342.0 715.0 C330.3 709.0 321.3 703.2 320.0 697.0Z" fill="none" stroke="#cacac8" stroke-width="46" stroke-opacity=".62" stroke-linejoin="round" filter="url(#soft)"/></g>
<g filter="url(#rough)"><path d="M320.0 697.0 C318.7 690.8 329.2 686.0 334.0 678.0 C338.8 670.0 338.5 657.5 349.0 649.0 C359.5 640.5 385.0 635.5 397.0 627.0 C409.0 618.5 407.5 606.0 421.0 598.0 C434.5 590.0 455.7 584.8 478.0 579.0 C500.3 573.2 539.0 568.2 555.0 563.0 C571.0 557.8 560.7 552.0 574.0 548.0 C587.3 544.0 612.5 541.7 635.0 539.0 C657.5 536.3 681.5 535.0 709.0 532.0 C736.5 529.0 768.2 523.5 800.0 521.0 C831.8 518.5 867.2 517.0 900.0 517.0 C932.8 517.0 968.7 517.3 997.0 521.0 C1025.3 524.7 1044.5 531.5 1070.0 539.0 C1095.5 546.5 1125.5 557.5 1150.0 566.0 C1174.5 574.5 1195.3 580.7 1217.0 590.0 C1238.7 599.3 1261.7 611.7 1280.0 622.0 C1298.3 632.3 1315.3 642.3 1327.0 652.0 C1338.7 661.7 1345.0 672.0 1350.0 680.0 C1355.0 688.0 1357.0 690.8 1357.0 700.0 C1357.0 709.2 1352.0 725.2 1350.0 735.0 C1348.0 744.8 1353.3 754.0 1345.0 759.0 C1336.7 764.0 1312.2 762.5 1300.0 765.0 C1287.8 767.5 1278.3 768.2 1272.0 774.0 C1265.7 779.8 1265.0 792.7 1262.0 800.0 C1259.0 807.3 1261.5 812.3 1254.0 818.0 C1246.5 823.7 1235.3 827.0 1217.0 834.0 C1198.7 841.0 1168.5 852.3 1144.0 860.0 C1119.5 867.7 1100.7 873.8 1070.0 880.0 C1039.3 886.2 996.7 891.5 960.0 897.0 C923.3 902.5 876.7 909.7 850.0 913.0 C823.3 916.3 820.5 917.0 800.0 917.0 C779.5 917.0 745.3 915.8 727.0 913.0 C708.7 910.2 705.3 901.2 690.0 900.0 C674.7 898.8 650.2 905.7 635.0 906.0 C619.8 906.3 611.2 903.3 599.0 902.0 C586.8 900.7 577.3 900.5 562.0 898.0 C546.7 895.5 524.7 890.7 507.0 887.0 C489.3 883.3 467.0 882.0 456.0 876.0 C445.0 870.0 449.7 858.3 441.0 851.0 C432.3 843.7 414.3 838.8 404.0 832.0 C393.7 825.2 379.0 817.8 379.0 810.0 C379.0 802.2 396.8 794.7 404.0 785.0 C411.2 775.3 424.3 760.7 422.0 752.0 C419.7 743.3 403.3 739.2 390.0 733.0 C376.7 726.8 353.7 721.0 342.0 715.0 C330.3 709.0 321.3 703.2 320.0 697.0Z" fill="#474744"/></g>
<g clip-path="url(#cf)"><rect x="300" y="500" width="1100" height="430" fill="#fff" filter="url(#dots)"/>
<path d="M902 726L1187 829" stroke="#e2e200" stroke-width="2.2" stroke-dasharray="2.5 2.5 3 9 3 2.5 2.5 6 2 4" fill="none" opacity=".85"/>
<path d="M902 727L1172 832" stroke="#e2e200" stroke-width="1.8" stroke-dasharray="3 2.5 5 9 2.5 6 2.5 6 2.5 3" fill="none" opacity=".85"/>
<path d="M902 729L1187 845" stroke="#e2e200" stroke-width="1.8" stroke-dasharray="2 9 3 6 2 9 2 2.5 5 6" fill="none" opacity=".85"/>
<path d="M918 736L1233 872" stroke="#e2e200" stroke-width="1.8" stroke-dasharray="2.5 2.5 2.5 3 5 2.5 3 9 5 6" fill="none" opacity=".85"/>
<path d="M891 725L1132 838" stroke="#e2e200" stroke-width="2.2" stroke-dasharray="2 9 3 9 2.5 9 3 6 2.5 6" fill="none" opacity=".85"/>
<path d="M911 736L1107 834" stroke="#e2e200" stroke-width="2.2" stroke-dasharray="5 3 5 3 3 4 2.5 2.5 5 6" fill="none" opacity=".85"/>
<path d="M893 728L1113 844" stroke="#e2e200" stroke-width="2.2" stroke-dasharray="3 3 3 4 2 9 2.5 9 2 4" fill="none" opacity=".85"/>
<path d="M911 740L1127 863" stroke="#e2e200" stroke-width="2.6" stroke-dasharray="2.5 2.5 5 6 5 2.5 2 9 5 3" fill="none" opacity=".85"/>
<path d="M888 728L1075 841" stroke="#e2e200" stroke-width="2.6" stroke-dasharray="2 6 2 3 2 2.5 2 6 2.5 4" fill="none" opacity=".85"/>
<path d="M904 739L1123 881" stroke="#e2e200" stroke-width="1.8" stroke-dasharray="2 2.5 2.5 4 5 2.5 2.5 9 2 4" fill="none" opacity=".85"/>
<path d="M900 738L1090 867" stroke="#e2e200" stroke-width="2.6" stroke-dasharray="2.5 6 2.5 3 2 6 2 2.5 5 3" fill="none" opacity=".85"/>
<path d="M899 739L1066 858" stroke="#e2e200" stroke-width="2.2" stroke-dasharray="2.5 9 3 9 3 4 2.5 4 2.5 9" fill="none" opacity=".85"/>
<path d="M897 739L1036 844" stroke="#e2e200" stroke-width="2.2" stroke-dasharray="2 4 2 2.5 2.5 3 2 2.5 2.5 3" fill="none" opacity=".85"/>
<path d="M891 735L1114 915" stroke="#e2e200" stroke-width="2.6" stroke-dasharray="2.5 9 2.5 9 2.5 9 3 2.5 5 9" fill="none" opacity=".85"/>
<path d="M904 748L1053 876" stroke="#e2e200" stroke-width="2.6" stroke-dasharray="2.5 3 2 3 3 2.5 5 3 3 9" fill="none" opacity=".85"/>
<path d="M880 729L1022 862" stroke="#e2e200" stroke-width="2.2" stroke-dasharray="2.5 4 2 9 5 4 2 4 2 9" fill="none" opacity=".85"/>
<path d="M888 738L1012 864" stroke="#e2e200" stroke-width="2.6" stroke-dasharray="2 3 3 3 2 3 2 3 2.5 9" fill="none" opacity=".85"/>
<path d="M893 746L1045 916" stroke="#e2e200" stroke-width="2.2" stroke-dasharray="5 9 2.5 4 5 9 2.5 4 2 9" fill="none" opacity=".85"/>
<path d="M886 741L1030 917" stroke="#e2e200" stroke-width="2.2" stroke-dasharray="3 4 3 6 5 9 2.5 4 2.5 9" fill="none" opacity=".85"/>
<path d="M880 737L978 869" stroke="#e2e200" stroke-width="2.6" stroke-dasharray="5 2.5 2 2.5 3 9 2.5 6 5 9" fill="none" opacity=".85"/>
<path d="M879 738L1005 928" stroke="#e2e200" stroke-width="1.8" stroke-dasharray="3 2.5 2 6 5 6 2.5 6 3 4" fill="none" opacity=".85"/>
<path d="M875 733L992 926" stroke="#e2e200" stroke-width="1.8" stroke-dasharray="2.5 3 2.5 4 2 6 2 9 2.5 6" fill="none" opacity=".85"/>
<path d="M877 740L948 873" stroke="#e2e200" stroke-width="2.6" stroke-dasharray="3 4 5 4 2 9 5 9 2 9" fill="none" opacity=".85"/>
<path d="M872 734L970 945" stroke="#e2e200" stroke-width="1.8" stroke-dasharray="3 4 2 3 5 4 3 6 2.5 6" fill="none" opacity=".85"/>
<path d="M871 735L935 891" stroke="#e2e200" stroke-width="2.6" stroke-dasharray="3 6 5 3 2.5 9 3 4 3 6" fill="none" opacity=".85"/>
<path d="M871 742L938 948" stroke="#e2e200" stroke-width="1.8" stroke-dasharray="3 6 5 6 5 6 2.5 9 5 9" fill="none" opacity=".85"/>
<path d="M870 747L900 871" stroke="#e2e200" stroke-width="1.8" stroke-dasharray="2 2.5 2 4 2 3 5 2.5 5 2.5" fill="none" opacity=".85"/>
<path d="M868 746L895 897" stroke="#e2e200" stroke-width="2.2" stroke-dasharray="5 6 2.5 9 2 2.5 2.5 6 3 4" fill="none" opacity=".85"/>
<path d="M865 740L881 901" stroke="#e2e200" stroke-width="2.6" stroke-dasharray="2.5 3 2.5 6 5 4 2.5 9 2 2.5" fill="none" opacity=".85"/>
<path d="M863 735L871 908" stroke="#e2e200" stroke-width="1.8" stroke-dasharray="2 3 2 9 3 2.5 3 3 5 6" fill="none" opacity=".85"/>
<path d="M862 734L859 871" stroke="#e2e200" stroke-width="2.2" stroke-dasharray="2 2.5 2 2.5 2 9 2 3 3 9" fill="none" opacity=".85"/>
<path d="M860 741L843 939" stroke="#e2e200" stroke-width="1.8" stroke-dasharray="2.5 6 2.5 6 2.5 2.5 2 3 2 9" fill="none" opacity=".85"/>
<path d="M858 743L838 888" stroke="#e2e200" stroke-width="2.6" stroke-dasharray="3 6 5 4 2 6 5 4 2 6" fill="none" opacity=".85"/>
<path d="M856 738L822 898" stroke="#e2e200" stroke-width="1.8" stroke-dasharray="2 9 3 6 2.5 4 2 6 3 9" fill="none" opacity=".85"/>
<path d="M853 744L798 939" stroke="#e2e200" stroke-width="2.6" stroke-dasharray="2 3 3 9 5 9 5 9 3 9" fill="none" opacity=".85"/>
<path d="M852 741L805 884" stroke="#e2e200" stroke-width="2.6" stroke-dasharray="3 6 5 2.5 3 3 2 6 2.5 3" fill="none" opacity=".85"/>
<path d="M847 751L772 944" stroke="#e2e200" stroke-width="1.8" stroke-dasharray="3 2.5 5 3 2 9 5 2.5 5 3" fill="none" opacity=".85"/>
<path d="M846 747L784 880" stroke="#e2e200" stroke-width="2.6" stroke-dasharray="2 9 2.5 9 2.5 3 2 3 3 9" fill="none" opacity=".85"/>
<path d="M847 739L754 913" stroke="#e2e200" stroke-width="1.8" stroke-dasharray="5 6 5 9 3 3 2 9 2.5 9" fill="none" opacity=".85"/>
<path d="M848 736L744 912" stroke="#e2e200" stroke-width="1.8" stroke-dasharray="2.5 9 5 9 3 6 2.5 3 3 2.5" fill="none" opacity=".85"/>
<path d="M846 737L742 895" stroke="#e2e200" stroke-width="1.8" stroke-dasharray="5 9 2 9 5 6 5 9 3 4" fill="none" opacity=".85"/>
<path d="M842 739L722 902" stroke="#e2e200" stroke-width="1.8" stroke-dasharray="5 4 3 2.5 3 6 2.5 2.5 2 4" fill="none" opacity=".85"/>
<path d="M845 733L682 931" stroke="#e2e200" stroke-width="2.6" stroke-dasharray="3 9 2.5 9 2 6 2.5 6 3 4" fill="none" opacity=".85"/>
<path d="M844 732L717 873" stroke="#e2e200" stroke-width="1.8" stroke-dasharray="2 9 5 6 5 2.5 2.5 9 3 9" fill="none" opacity=".85"/>
<path d="M826 749L672 904" stroke="#e2e200" stroke-width="2.6" stroke-dasharray="2 4 5 3 2.5 9 2.5 9 3 4" fill="none" opacity=".85"/>
<path d="M834 738L687 876" stroke="#e2e200" stroke-width="1.8" stroke-dasharray="5 3 3 3 2 6 2 9 5 6" fill="none" opacity=".85"/>
<path d="M828 742L682 868" stroke="#e2e200" stroke-width="2.2" stroke-dasharray="3 3 2.5 6 5 3 2 2.5 2.5 4" fill="none" opacity=".85"/>
<path d="M836 733L670 867" stroke="#e2e200" stroke-width="1.8" stroke-dasharray="2.5 3 2.5 6 2 4 3 4 2.5 6" fill="none" opacity=".85"/>
<path d="M822 741L604 904" stroke="#e2e200" stroke-width="2.6" stroke-dasharray="5 6 5 3 5 2.5 2 4 3 6" fill="none" opacity=".85"/>
<path d="M813 746L630 874" stroke="#e2e200" stroke-width="2.6" stroke-dasharray="5 2.5 5 2.5 2 3 3 3 2.5 6" fill="none" opacity=".85"/>
<path d="M826 735L640 855" stroke="#e2e200" stroke-width="2.6" stroke-dasharray="3 4 3 4 2.5 2.5 2 4 5 2.5" fill="none" opacity=".85"/>
<path d="M833 730L629 855" stroke="#e2e200" stroke-width="2.6" stroke-dasharray="2.5 6 3 2.5 3 2.5 2.5 2.5 5 2.5" fill="none" opacity=".85"/>
<path d="M822 735L623 852" stroke="#e2e200" stroke-width="2.6" stroke-dasharray="3 4 3 2.5 2 6 2.5 2.5 5 9" fill="none" opacity=".85"/>
<path d="M813 738L592 858" stroke="#e2e200" stroke-width="2.6" stroke-dasharray="3 6 2.5 4 2.5 6 2 3 5 6" fill="none" opacity=".85"/>
<path d="M835 726L568 862" stroke="#e2e200" stroke-width="1.8" stroke-dasharray="5 6 3 4 2.5 4 3 4 5 6" fill="none" opacity=".85"/>
<path d="M810 737L583 846" stroke="#e2e200" stroke-width="2.6" stroke-dasharray="3 9 2 9 2 9 5 9 5 2.5" fill="none" opacity=".85"/>
<path d="M817 732L533 859" stroke="#e2e200" stroke-width="2.6" stroke-dasharray="5 6 5 3 2 3 2.5 6 3 9" fill="none" opacity=".85"/>
<path d="M818 730L561 837" stroke="#e2e200" stroke-width="2.6" stroke-dasharray="5 2.5 5 3 3 9 2.5 2.5 5 2.5" fill="none" opacity=".85"/>
<path d="M801 736L498 855" stroke="#e2e200" stroke-width="2.6" stroke-dasharray="3 9 2 6 2.5 4 2.5 6 2 9" fill="none" opacity=".85"/>
<path d="M805 733L577 816" stroke="#e2e200" stroke-width="1.8" stroke-dasharray="2 3 2.5 6 2.5 3 5 4 5 3" fill="none" opacity=".85"/>
<path d="M794 736L589 806" stroke="#e2e200" stroke-width="2.6" stroke-dasharray="2.5 4 5 6 2.5 2.5 5 4 2 4" fill="none" opacity=".85"/>
<path d="M802 732L585 803" stroke="#e2e200" stroke-width="2.2" stroke-dasharray="2.5 4 2.5 2.5 2.5 2.5 3 9 2 2.5" fill="none" opacity=".85"/>
</g>
<g filter="url(#bump2)"><path d="M779.0 630.0 C792.8 627.3 822.8 625.3 846.0 624.0 C869.2 622.7 889.0 620.2 918.0 622.0 C947.0 623.8 991.3 626.2 1020.0 635.0 C1048.7 643.8 1075.7 663.0 1090.0 675.0 C1104.3 687.0 1112.3 702.0 1106.0 707.0 C1099.7 712.0 1069.8 705.8 1052.0 705.0 C1034.2 704.2 1016.0 702.0 999.0 702.0 C982.0 702.0 956.3 700.0 950.0 705.0 C943.7 710.0 964.0 724.8 961.0 732.0 C958.0 739.2 941.3 748.0 932.0 748.0 C922.7 748.0 912.7 737.3 905.0 732.0 C897.3 726.7 896.3 718.7 886.0 716.0 C875.7 713.3 854.7 709.8 843.0 716.0 C831.3 722.2 828.0 743.2 816.0 753.0 C804.0 762.8 783.0 775.8 771.0 775.0 C759.0 774.2 745.3 756.2 744.0 748.0 C742.7 739.8 768.3 732.3 763.0 726.0 C757.7 719.7 717.5 716.2 712.0 710.0 C706.5 703.8 724.2 697.0 730.0 689.0 C735.8 681.0 741.5 670.2 747.0 662.0 C752.5 653.8 757.7 645.3 763.0 640.0 C768.3 634.7 765.2 632.7 779.0 630.0Z" fill="#ccc"/>
<path d="M977.4 874.0 C977.9 876.8 976.4 879.9 974.1 882.7 C971.8 885.5 968.6 889.6 963.6 891.0 C958.6 892.3 950.1 891.2 944.0 890.8 C937.9 890.4 932.0 890.1 927.0 888.8 C921.9 887.4 915.8 885.2 913.6 882.8 C911.4 880.3 913.7 876.9 913.9 874.0 C914.0 871.1 912.4 868.0 914.4 865.5 C916.5 862.9 921.3 860.3 926.2 858.6 C931.1 856.9 938.6 854.7 944.0 855.2 C949.4 855.7 954.0 859.6 958.5 861.4 C963.1 863.2 968.2 864.0 971.4 866.1 C974.5 868.2 977.0 871.2 977.4 874.0Z" fill="#ccc"/>
<path d="M1212.0 781.0 C1213.1 783.0 1216.4 785.8 1215.0 787.7 C1213.6 789.5 1207.8 791.6 1203.4 792.1 C1199.1 792.7 1194.0 790.8 1189.0 791.0 C1184.0 791.2 1177.7 793.7 1173.2 793.2 C1168.6 792.7 1163.8 790.0 1161.7 788.0 C1159.6 786.0 1160.0 783.2 1160.5 781.0 C1161.0 778.8 1161.9 776.3 1164.6 774.8 C1167.4 773.2 1173.1 772.5 1177.2 771.9 C1181.2 771.3 1184.8 771.3 1189.0 771.1 C1193.2 770.9 1199.4 769.7 1202.6 770.5 C1205.9 771.3 1207.1 774.2 1208.7 776.0 C1210.2 777.7 1211.0 779.0 1212.0 781.0Z" fill="#ccc"/>
<path d="M1133.9 621.0 C1133.8 622.2 1133.4 623.7 1131.9 624.6 C1130.4 625.6 1127.4 626.0 1124.9 626.8 C1122.4 627.5 1119.9 628.7 1117.0 628.9 C1114.1 629.1 1110.8 628.3 1107.7 627.8 C1104.6 627.2 1100.2 626.6 1098.5 625.5 C1096.9 624.4 1097.7 622.4 1097.9 621.0 C1098.1 619.6 1098.1 618.0 1099.7 616.8 C1101.3 615.6 1104.6 614.8 1107.5 614.1 C1110.4 613.4 1113.9 612.5 1117.0 612.5 C1120.1 612.5 1123.8 613.4 1126.4 614.2 C1128.9 615.0 1130.9 616.2 1132.1 617.3 C1133.4 618.5 1133.9 619.8 1133.9 621.0Z" fill="#ccc"/>
<path d="M1282.9 727.0 C1284.3 728.4 1280.4 730.4 1275.9 731.7 C1271.4 733.0 1263.2 734.1 1255.7 734.8 C1248.2 735.4 1238.5 735.8 1231.0 735.6 C1223.5 735.4 1216.2 734.3 1210.5 733.5 C1204.7 732.6 1200.0 731.7 1196.6 730.6 C1193.2 729.5 1190.0 728.2 1190.3 727.0 C1190.7 725.8 1196.0 724.9 1198.8 723.6 C1201.5 722.4 1201.5 720.1 1206.9 719.4 C1212.3 718.7 1222.9 719.3 1231.0 719.3 C1239.1 719.3 1249.7 718.6 1255.7 719.2 C1261.8 719.9 1263.0 721.9 1267.5 723.2 C1272.1 724.5 1281.5 725.6 1282.9 727.0Z" fill="#ccc"/>
<path d="M607.1 811.0 C607.7 813.2 605.9 816.8 603.5 818.3 C601.1 819.9 595.9 819.5 592.8 820.2 C589.7 821.0 588.1 822.0 585.0 822.6 C581.9 823.3 576.8 824.8 574.1 823.9 C571.4 823.1 570.6 819.6 568.7 817.4 C566.8 815.3 562.6 813.1 562.7 811.0 C562.8 808.9 566.8 806.3 569.2 804.7 C571.5 803.2 574.3 802.7 577.0 801.5 C579.6 800.2 581.9 797.9 585.0 797.4 C588.1 796.9 592.9 797.3 595.5 798.6 C598.0 799.9 598.1 803.0 600.1 805.0 C602.0 807.1 606.6 808.8 607.1 811.0Z" fill="#ccc"/>
<path d="M642.3 760.0 C642.2 764.8 642.5 769.0 641.6 774.1 C640.8 779.1 639.9 787.2 637.5 790.3 C635.1 793.4 630.0 794.1 627.0 792.8 C624.0 791.5 621.6 785.6 619.2 782.4 C616.9 779.2 614.1 777.4 612.8 773.6 C611.6 769.9 611.4 764.4 611.6 760.0 C611.8 755.6 613.0 752.2 613.9 747.4 C614.8 742.6 614.9 733.6 617.0 731.2 C619.2 728.9 623.8 733.1 627.0 733.5 C630.2 733.9 633.6 731.5 636.2 733.5 C638.7 735.4 641.3 740.9 642.3 745.3 C643.3 749.7 642.4 755.2 642.3 760.0Z" fill="#ccc"/>
<path d="M1136.7 545.0 C1136.4 546.3 1140.4 547.9 1138.1 548.8 C1135.9 549.7 1127.7 549.7 1123.0 550.3 C1118.3 550.9 1114.3 552.4 1110.0 552.4 C1105.7 552.4 1101.3 550.9 1097.1 550.2 C1092.9 549.6 1087.1 549.3 1084.8 548.4 C1082.4 547.5 1082.9 546.1 1083.1 545.0 C1083.3 543.9 1084.6 543.0 1086.2 541.8 C1087.7 540.6 1088.5 538.7 1092.5 537.9 C1096.4 537.2 1104.8 537.0 1110.0 537.2 C1115.2 537.5 1119.0 538.7 1123.9 539.4 C1128.9 540.0 1137.5 540.1 1139.6 541.0 C1141.7 542.0 1136.9 543.7 1136.7 545.0Z" fill="#ccc"/>
<path d="M1197.4 568.0 C1197.8 569.1 1197.2 570.2 1195.8 571.4 C1194.4 572.5 1192.6 574.2 1189.1 574.8 C1185.6 575.5 1179.1 575.6 1175.0 575.4 C1170.9 575.1 1168.5 573.7 1164.3 573.2 C1160.1 572.6 1151.5 573.0 1149.5 572.1 C1147.6 571.3 1151.6 569.2 1152.6 568.0 C1153.5 566.8 1153.8 565.9 1155.2 564.8 C1156.7 563.7 1158.0 561.9 1161.3 561.3 C1164.6 560.8 1170.8 561.3 1175.0 561.4 C1179.2 561.6 1183.5 561.8 1186.6 562.4 C1189.6 563.0 1191.5 564.1 1193.3 565.0 C1195.1 566.0 1197.0 566.9 1197.4 568.0Z" fill="#ccc"/>
</g>
<path d="M779.0 630.0 C792.8 627.3 822.8 625.3 846.0 624.0 C869.2 622.7 889.0 620.2 918.0 622.0 C947.0 623.8 991.3 626.2 1020.0 635.0 C1048.7 643.8 1075.7 663.0 1090.0 675.0 C1104.3 687.0 1112.3 702.0 1106.0 707.0 C1099.7 712.0 1069.8 705.8 1052.0 705.0 C1034.2 704.2 1016.0 702.0 999.0 702.0 C982.0 702.0 956.3 700.0 950.0 705.0 C943.7 710.0 964.0 724.8 961.0 732.0 C958.0 739.2 941.3 748.0 932.0 748.0 C922.7 748.0 912.7 737.3 905.0 732.0 C897.3 726.7 896.3 718.7 886.0 716.0 C875.7 713.3 854.7 709.8 843.0 716.0 C831.3 722.2 828.0 743.2 816.0 753.0 C804.0 762.8 783.0 775.8 771.0 775.0 C759.0 774.2 745.3 756.2 744.0 748.0 C742.7 739.8 768.3 732.3 763.0 726.0 C757.7 719.7 717.5 716.2 712.0 710.0 C706.5 703.8 724.2 697.0 730.0 689.0 C735.8 681.0 741.5 670.2 747.0 662.0 C752.5 653.8 757.7 645.3 763.0 640.0 C768.3 634.7 765.2 632.7 779.0 630.0Z" fill="url(#pe)" opacity=".8"/>
<g fill="none" stroke-width="2.4">
<path d="M1296 600C1320 630 1342 680 1354 727" stroke="#9c9cd4" stroke-width="2"/>
<path d="M319.0 950.0 C317.5 961.5 307.3 996.5 310.0 1019.0 C312.7 1041.5 324.3 1064.3 335.0 1085.0 C345.7 1105.7 350.0 1122.7 374.0 1143.0 C398.0 1163.3 442.3 1191.0 479.0 1207.0 C515.7 1223.0 555.7 1230.7 594.0 1239.0 C632.3 1247.3 666.3 1253.0 709.0 1257.0 C751.7 1261.0 819.5 1262.0 850.0 1263.0 C880.5 1264.0 861.5 1266.2 892.0 1263.0 C922.5 1259.8 986.5 1253.3 1033.0 1244.0 C1079.5 1234.7 1132.7 1220.0 1171.0 1207.0 C1209.3 1194.0 1234.0 1182.8 1263.0 1166.0 C1292.0 1149.2 1324.2 1126.3 1345.0 1106.0 C1365.8 1085.7 1378.8 1064.2 1388.0 1044.0 C1397.2 1023.8 1399.2 1001.5 1400.0 985.0 C1400.8 968.5 1395.8 954.5 1393.0 945.0 C1390.2 935.5 1384.7 930.8 1383.0 928.0" stroke="#9fe6b4"/>
<path d="M872.0 382.0 C869.8 381.7 863.8 380.0 859.0 380.0 C854.2 380.0 852.8 377.3 843.0 382.0 C833.2 386.7 817.8 391.7 800.0 408.0 C782.2 424.3 754.3 455.8 736.0 480.0 C717.7 504.2 703.7 525.5 690.0 553.0 C676.3 580.5 665.0 611.3 654.0 645.0 C643.0 678.7 632.7 715.2 624.0 755.0 C615.3 794.8 606.3 857.8 602.0 884.0 C597.7 910.2 598.7 907.3 598.0 912.0" stroke="#e8a8a0"/>
<path d="M588.0 1005.0 C587.7 1015.8 586.2 1048.7 586.0 1070.0 C585.8 1091.3 586.0 1103.3 587.0 1133.0 C588.0 1162.7 588.5 1215.0 592.0 1248.0 C595.5 1281.0 600.0 1304.2 608.0 1331.0 C616.0 1357.8 634.7 1396.0 640.0 1409.0" stroke="#e8a8a0"/>
<path d="M859.0 380.0 C861.2 380.3 863.8 377.8 872.0 382.0 C880.2 386.2 896.5 394.2 908.0 405.0 C919.5 415.8 931.7 430.7 941.0 447.0 C950.3 463.3 957.2 486.7 964.0 503.0 C970.8 519.3 979.0 538.0 982.0 545.0" stroke="#8a8890" stroke-width="2"/>
</g>
</svg>
<div id="band"></div>
<div id="info"><i>Current Mesh: Poisson mesh</i><br>Vertices: 197,028 &nbsp;&nbsp; <b>(286,090)</b><br>Faces: 385,294 &nbsp;&nbsp; <b>(385,294)</b><br>Selection: v: 0 f: 0<br>VQ</div>
</div>
<div id="split"></div>
<div id="panel">
 <div id="title"><span>Project_1</span><svg width="18" height="19" viewBox="0 0 20 20" preserveAspectRatio="none"><rect x="1.5" y="7.5" width="11" height="10" fill="none" stroke="#000" stroke-width="3"/><path d="M6 5V1.5H18V12H14.5" fill="none" stroke="#000" stroke-width="3"/></svg></div>
 <div id="tree">
  <div class="row r0"><span class="arr"><svg width="20" height="31" viewBox="0 0 20 31"><path d="M3.4 2L16 15.3L3.4 28.6" fill="none" stroke="#a2a2a2" stroke-width="4.8"/></svg></span><span class="eye"><svg width="46" height="46" viewBox="0 0 46 46"><g stroke="#6a6a6a" stroke-width="1.1" fill="none" opacity=".55"><path d="M1 14L8 20M4 17L10 22M9 11L14 18M16 9L18 15M24 8L23.5 13M31 9L29 14M37 10L34 16M43 10L38 17M44 14L40 19M7 29L3 31M12 32L10 36M18 33.5L17 37.5M24 33.5L24.5 37.5M30 32L32 36"/></g><path d="M3 24Q8 17 17 14.5Q27 12.5 36 14.5Q41 16 43.5 17.5Q41.5 25 35 29.5Q26 35 15 32.5Q7 30 3 24Z" fill="#fdfdfd" stroke="#707070" stroke-width="1.3" opacity=".95"/><path d="M10.5 23.5Q10.500 16.5 17 14.600Q23 13.200 30 13.800Q34.5 18 33.500 24Q31.500 30.500 27 32.500Q20 34 14.500 32.200Q10.500 29 10.500 23.500Z" fill="#00ea14"/><path d="M11.500 27Q16 33 24 33Q30 32 33 26" fill="none" stroke="#0a9a1a" stroke-width="1.2" opacity=".55"/><ellipse cx="21.2" cy="21" rx="4.7" ry="5.2" fill="#000"/><ellipse cx="26.5" cy="18.8" rx="2.2" ry="3" fill="#fff"/></svg></span><span class="lbl">0 Seletar_250619_1335hrs_B *</span>
   <span class="ic" style="left:601px"><svg width="32" height="32" viewBox="0 0 46 46"><g fill="none" stroke="#8a8a8a" stroke-width="1.6"><rect x="1" y="10" width="34.5" height="35.5"/><rect x="11" y="1" width="34.5" height="36" opacity=".75"/><path d="M1 10L11 1M35.5 10L45.5 1M1 45.5L11 37M35.5 45.5L45.5 37"/></g></svg></span>
   <span class="ic hl" style="left:649.4px"><svg width="30.2" height="35" viewBox="0 0 44 51" fill="#333"><rect x="3" y="8" width="3.1" height="3.1"/><rect x="3" y="44" width="3.1" height="3.1"/><rect x="8" y="3" width="3.1" height="3.1"/><rect x="8" y="39" width="3.1" height="3.1"/><rect x="16" y="11" width="3.1" height="3.1"/><rect x="16" y="47" width="3.1" height="3.1"/><rect x="26" y="2" width="3.1" height="3.1"/><rect x="26" y="38" width="3.1" height="3.1"/><rect x="35" y="9.5" width="3.1" height="3.1"/><rect x="35" y="45.5" width="3.1" height="3.1"/><rect x="40" y="5" width="3.1" height="3.1"/><rect x="40" y="41" width="3.1" height="3.1"/></svg></span>
   <span class="ic" style="left:697.8px"><svg width="26" height="32" viewBox="0 0 38 46"><g fill="none" stroke="#333" stroke-width="1.5"><ellipse cx="19" cy="5.5" rx="17.5" ry="4.5"/><ellipse cx="19" cy="40" rx="17.5" ry="5"/><path d="M1.5 5.5V40M36.5 5.5V40M4 3L4 43M34 3V43"/><path d="M4 6L19 44L34 6M4 42L14 3L24 43L34 3M19 1V10M9 2L19 44M29 2L19 44M1.5 40L14 3M36.5 40L24 3"/><path d="M3 36L19 45L35 36M3 38H35"/></g></svg></span>
   <span class="ic" style="left:746.2px"><svg width="27" height="30" viewBox="0 0 36 43"><defs><linearGradient id="cgs" x1="0" x2="1" y1="0" y2="0"><stop offset="0" stop-color="#8fbaeb"/><stop offset=".18" stop-color="#c4dcf5"/><stop offset=".36" stop-color="#fbfdff"/><stop offset=".6" stop-color="#c2daf4"/><stop offset=".85" stop-color="#86b2e4"/><stop offset="1" stop-color="#6c9fdb"/></linearGradient></defs><path d="M0 5Q18 -3 36 5V38Q18 47 0 38Z" fill="url(#cgs)"/><ellipse cx="18" cy="5" rx="18" ry="4.6" fill="#cfe3f7"/></svg></span>
   <span class="ic hl" style="left:794.6px"><svg width="27" height="32" viewBox="0 0 40 47"><path d="M7 3.5L24 .8L31.5 6L31 9.5L16.5 46.5L1.5 43.5L15 9.5Z" fill="#ec7080"/><path d="M15 9.5L31 9.3" stroke="#c84848" stroke-width="1" fill="none" opacity=".7"/><path d="M15.5 9.5L8 41" stroke="#c84848" stroke-width="1" fill="none" opacity=".6"/><g fill="none" stroke="#8a6e58" stroke-width="1.1"><path d="M1.5 8L15 9.5L33 9L39 3.5L24 .8L7 3.5Z"/><path d="M1.5 8V43.5L16.5 46.5L33.5 44.5V9M33.5 44.5L39 39V3.5M16.5 46.5L15 9.5"/></g></svg></span>
   <span class="ic hl" style="left:843px"><svg width="34" height="31" viewBox="0 0 47 44"><defs><pattern id="ghs" width="5" height="5" patternUnits="userSpaceOnUse"><rect width="5" height="5" fill="#b4b4b4"/><path d="M0 0L5 5M5 0L0 5M2.5 0V5" stroke="#2a2a2a" stroke-width=".9"/></pattern></defs><path d="M5 4Q12 0 23 1Q36 0 42 6Q47 14 46 24Q44 34 38 39Q30 44 22 43Q12 44 6 36Q0 28 1 16Q1 8 5 4Z" fill="url(#ghs)" stroke="#333" stroke-width="1.3"/><path d="M10 11L17 9L19 13L23 14L27 12L29 8L35 10L36 16L33 20L34 25L37 29L34 35L29 36L26 31L21 30L18 33L16 37L11 35L10 29L12 24L9 18Z" fill="#e8e8e8" stroke="#36d436" stroke-width="1.6"/></svg></span>
  </div>
  <div class="row r1"><span class="arr"><svg width="20" height="31" viewBox="0 0 20 31"><path d="M3.4 2L16 15.3L3.4 28.6" fill="none" stroke="#a2a2a2" stroke-width="4.8"/></svg></span><span class="selbg"></span><span class="yel"></span><span class="eye on"><svg width="46" height="46" viewBox="0 0 46 46"><g stroke="#6a6a6a" stroke-width="1.1" fill="none" opacity=".55"><path d="M1 14L8 20M4 17L10 22M9 11L14 18M16 9L18 15M24 8L23.5 13M31 9L29 14M37 10L34 16M43 10L38 17M44 14L40 19M7 29L3 31M12 32L10 36M18 33.5L17 37.5M24 33.5L24.5 37.5M30 32L32 36"/></g><path d="M3 24Q8 17 17 14.5Q27 12.5 36 14.5Q41 16 43.5 17.5Q41.5 25 35 29.5Q26 35 15 32.5Q7 30 3 24Z" fill="#fdfdfd" stroke="#707070" stroke-width="1.3" opacity=".95"/><path d="M10.5 23.5Q10.500 16.5 17 14.600Q23 13.200 30 13.800Q34.5 18 33.500 24Q31.500 30.500 27 32.500Q20 34 14.500 32.200Q10.500 29 10.500 23.500Z" fill="#00ea14"/><path d="M11.500 27Q16 33 24 33Q30 32 33 26" fill="none" stroke="#0a9a1a" stroke-width="1.2" opacity=".55"/><ellipse cx="21.2" cy="21" rx="4.7" ry="5.2" fill="#000"/><ellipse cx="26.5" cy="18.8" rx="2.2" ry="3" fill="#fff"/></svg></span><span class="lbl">1 Poisson mesh *</span>
   <span class="ic" style="left:601px"><svg width="32" height="32" viewBox="0 0 46 46"><g fill="none" stroke="#6c6c00" stroke-width="1.6"><rect x="1" y="10" width="34.5" height="35.5"/><rect x="11" y="1" width="34.5" height="36" opacity=".75"/><path d="M1 10L11 1M35.5 10L45.5 1M1 45.5L11 37M35.5 45.5L45.5 37"/></g></svg></span>
   <span class="ic" style="left:649.4px"><svg width="30.2" height="35" viewBox="0 0 44 51" fill="#333"><rect x="3" y="8" width="3.1" height="3.1"/><rect x="3" y="44" width="3.1" height="3.1"/><rect x="8" y="3" width="3.1" height="3.1"/><rect x="8" y="39" width="3.1" height="3.1"/><rect x="16" y="11" width="3.1" height="3.1"/><rect x="16" y="47" width="3.1" height="3.1"/><rect x="26" y="2" width="3.1" height="3.1"/><rect x="26" y="38" width="3.1" height="3.1"/><rect x="35" y="9.5" width="3.1" height="3.1"/><rect x="35" y="45.5" width="3.1" height="3.1"/><rect x="40" y="5" width="3.1" height="3.1"/><rect x="40" y="41" width="3.1" height="3.1"/></svg></span>
   <span class="ic" style="left:697.8px"><svg width="26" height="32" viewBox="0 0 38 46"><g fill="none" stroke="#3c3c00" stroke-width="1.5"><ellipse cx="19" cy="5.5" rx="17.5" ry="4.5"/><ellipse cx="19" cy="40" rx="17.5" ry="5"/><path d="M1.5 5.5V40M36.5 5.5V40M4 3L4 43M34 3V43"/><path d="M4 6L19 44L34 6M4 42L14 3L24 43L34 3M19 1V10M9 2L19 44M29 2L19 44M1.5 40L14 3M36.5 40L24 3"/><path d="M3 36L19 45L35 36M3 38H35"/></g></svg></span>
   <span class="ic hg" style="left:746.2px"><svg width="27" height="30" viewBox="0 0 36 43"><defs><linearGradient id="cgs2" x1="0" x2="1" y1="0" y2="0"><stop offset="0" stop-color="#8fbaeb"/><stop offset=".18" stop-color="#c4dcf5"/><stop offset=".36" stop-color="#fbfdff"/><stop offset=".6" stop-color="#c2daf4"/><stop offset=".85" stop-color="#86b2e4"/><stop offset="1" stop-color="#6c9fdb"/></linearGradient></defs><path d="M0 5Q18 -3 36 5V38Q18 47 0 38Z" fill="url(#cgs2)"/><ellipse cx="18" cy="5" rx="18" ry="4.6" fill="#cfe3f7"/></svg></span>
   <span class="ic hg" style="left:794.6px"><svg width="27" height="32" viewBox="0 0 40 47"><path d="M7 3.5L24 .8L31.5 6L31 9.5L16.5 46.5L1.5 43.5L15 9.5Z" fill="#e8681c"/><path d="M15 9.5L31 9.3" stroke="#c84848" stroke-width="1" fill="none" opacity=".7"/><path d="M15.5 9.5L8 41" stroke="#c84848" stroke-width="1" fill="none" opacity=".6"/><g fill="none" stroke="#80703c" stroke-width="1.1"><path d="M1.5 8L15 9.5L33 9L39 3.5L24 .8L7 3.5Z"/><path d="M1.5 8V43.5L16.5 46.5L33.5 44.5V9M33.5 44.5L39 39V3.5M16.5 46.5L15 9.5"/></g></svg></span>
   <span class="ic hg" style="left:843px"><svg width="34" height="31" viewBox="0 0 47 44"><defs><pattern id="ghs2" width="5" height="5" patternUnits="userSpaceOnUse"><rect width="5" height="5" fill="#b4b4b4"/><path d="M0 0L5 5M5 0L0 5M2.5 0V5" stroke="#2a2a2a" stroke-width=".9"/></pattern></defs><path d="M5 4Q12 0 23 1Q36 0 42 6Q47 14 46 24Q44 34 38 39Q30 44 22 43Q12 44 6 36Q0 28 1 16Q1 8 5 4Z" fill="url(#ghs2)" stroke="#333" stroke-width="1.3"/><path d="M10 11L17 9L19 13L23 14L27 12L29 8L35 10L36 16L33 20L34 25L37 29L34 35L29 36L26 31L21 30L18 33L16 37L11 35L10 29L12 24L9 18Z" fill="#e8e8e8" stroke="#36d436" stroke-width="1.6"/></svg></span>
  </div>
 </div>
 <div id="group">
  <div id="gtitle">Poisson mesh</div>
  <div id="tabs">
   <div class="tab" style="left:0;width:127px"><span class="ti" style="margin-left:-6.5px;margin-top:-1px"><svg width="46" height="46" viewBox="0 0 46 46"><g fill="none" stroke="#5a5a5a" stroke-width="1.4"><rect x="1" y="10" width="34.5" height="35.5"/><rect x="11" y="1" width="34.5" height="36" opacity=".75"/><path d="M1 10L11 1M35.5 10L45.5 1M1 45.5L11 37M35.5 45.5L45.5 37"/></g></svg></span></div>
   <div class="tab sel" style="left:127px;width:141px"><span class="ti" style="margin-left:-7.5px;margin-top:-2.5px"><svg width="44.0" height="51" viewBox="0 0 44 51" fill="#222"><rect x="3" y="8" width="3.1" height="3.1"/><rect x="3" y="44" width="3.1" height="3.1"/><rect x="8" y="3" width="3.1" height="3.1"/><rect x="8" y="39" width="3.1" height="3.1"/><rect x="16" y="11" width="3.1" height="3.1"/><rect x="16" y="47" width="3.1" height="3.1"/><rect x="26" y="2" width="3.1" height="3.1"/><rect x="26" y="38" width="3.1" height="3.1"/><rect x="35" y="9.5" width="3.1" height="3.1"/><rect x="35" y="45.5" width="3.1" height="3.1"/><rect x="40" y="5" width="3.1" height="3.1"/><rect x="40" y="41" width="3.1" height="3.1"/></svg></span></div>
   <div class="tab" style="left:268px;width:130px"><span class="ti" style="margin-left:-5.5px;margin-top:-0.7px"><svg width="38" height="46" viewBox="0 0 38 46"><g fill="none" stroke="#2a2a2a" stroke-width="1.2"><ellipse cx="19" cy="5.5" rx="17.5" ry="4.5"/><ellipse cx="19" cy="40" rx="17.5" ry="5"/><path d="M1.5 5.5V40M36.5 5.5V40M4 3L4 43M34 3V43"/><path d="M4 6L19 44L34 6M4 42L14 3L24 43L34 3M19 1V10M9 2L19 44M29 2L19 44M1.5 40L14 3M36.5 40L24 3"/><path d="M3 36L19 45L35 36M3 38H35"/></g></svg></span></div>
   <div class="tab" style="left:398px;width:135px"><span class="ti" style="margin-left:-4.5px;margin-top:-0.5px"><svg width="39" height="43" viewBox="0 0 36 43"><defs><linearGradient id="cgt" x1="0" x2="1" y1="0" y2="0"><stop offset="0" stop-color="#8fbaeb"/><stop offset=".18" stop-color="#c4dcf5"/><stop offset=".36" stop-color="#fbfdff"/><stop offset=".6" stop-color="#c2daf4"/><stop offset=".85" stop-color="#86b2e4"/><stop offset="1" stop-color="#6c9fdb"/></linearGradient></defs><path d="M0 5Q18 -3 36 5V38Q18 47 0 38Z" fill="url(#cgt)"/><ellipse cx="18" cy="5" rx="18" ry="4.6" fill="#cfe3f7"/></svg></span></div>
   <div class="tab" style="left:533px;width:135px"><span class="ti" style="margin-left:-4px;margin-top:0px"><svg width="39" height="46" viewBox="0 0 40 47"><path d="M7 3.5L24 .8L31.5 6L31 9.5L16.5 46.5L1.5 43.5L15 9.5Z" fill="#f47676"/><path d="M15 9.5L31 9.3" stroke="#c84848" stroke-width="1" fill="none" opacity=".7"/><path d="M15.5 9.5L8 41" stroke="#c84848" stroke-width="1" fill="none" opacity=".6"/><g fill="none" stroke="#8a6e58" stroke-width="1.1"><path d="M1.5 8L15 9.5L33 9L39 3.5L24 .8L7 3.5Z"/><path d="M1.5 8V43.5L16.5 46.5L33.5 44.5V9M33.5 44.5L39 39V3.5M16.5 46.5L15 9.5"/></g></svg></span></div>
   <div class="tab" style="left:668px;width:131px"><span class="ti" style="margin-left:-1.5px;margin-top:0px"><svg width="49" height="44" viewBox="0 0 47 44"><defs><pattern id="ght" width="5" height="5" patternUnits="userSpaceOnUse"><rect width="5" height="5" fill="#b4b4b4"/><path d="M0 0L5 5M5 0L0 5M2.5 0V5" stroke="#2a2a2a" stroke-width=".9"/></pattern></defs><path d="M5 4Q12 0 23 1Q36 0 42 6Q47 14 46 24Q44 34 38 39Q30 44 22 43Q12 44 6 36Q0 28 1 16Q1 8 5 4Z" fill="url(#ght)" stroke="#333" stroke-width="1.3"/><path d="M10 11L17 9L19 13L23 14L27 12L29 8L35 10L36 16L33 20L34 25L37 29L34 35L29 36L26 31L21 30L18 33L16 37L11 35L10 29L12 24L9 18Z" fill="#e8e8e8" stroke="#36d436" stroke-width="1.6"/></svg></span></div>
  </div>
  <div id="pane">
   <div class="bl" style="top:39px">Shading</div>
   <div class="btn on" style="left:352.5px;top:32px;width:97px;height:51px;padding-top:5px">Vert</div>
   <div class="btn" style="left:457px;top:34px;width:228px;height:50px;letter-spacing:-0.35px;padding-top:2.8px">Dot Decorator</div>
   <div class="btn" style="left:698px;top:34px;width:104px;height:50px;padding-top:2.8px">None</div>
   <div class="bl" style="top:119px">Color</div>
   <div class="btn" style="left:354px;top:114px;width:108px;height:50px;padding-top:2px;letter-spacing:-0.6px">Mesh</div>
   <div class="btn on" style="left:464px;top:112.5px;width:167px;height:50.5px;padding-top:4.5px">User-Def</div>
   <div id="ycol"></div>
   <div class="bl" style="top:307px">Point Size</div>
   <div id="track"></div><div id="knob"></div>
  </div>
  <div id="apply">apply to all visible layers</div><div id="chk"></div>
 </div>
 <div id="log">
  <div id="logtext"><span class="g">Applied filter Screened Poisson Surface<br>Reconstruction in 20448 msec</span><br>Selected 22408 faces with and edge longer than<br>0.476122<br><span class="g">Applied filter Select Faces with edges longer<br>than... in 33 msec<br>Applied filter Delete Selected Faces and Vertices</span><div class="g last">in 160 msec</div></div>
  <div id="sb"><div id="thumb"></div><svg style="top:20px" width="26" height="20" viewBox="0 0 26 20"><path d="M2 17.500L13 6L24 17.500" fill="none" stroke="#5a5a5a" stroke-width="5.2"/></svg><svg style="top:274px" width="26" height="20" viewBox="0 0 26 20"><path d="M2 2.500L13 14L24 2.500" fill="none" stroke="#5a5a5a" stroke-width="5.2"/></svg></div>
 </div>
</div>
</div>
</body></html>
